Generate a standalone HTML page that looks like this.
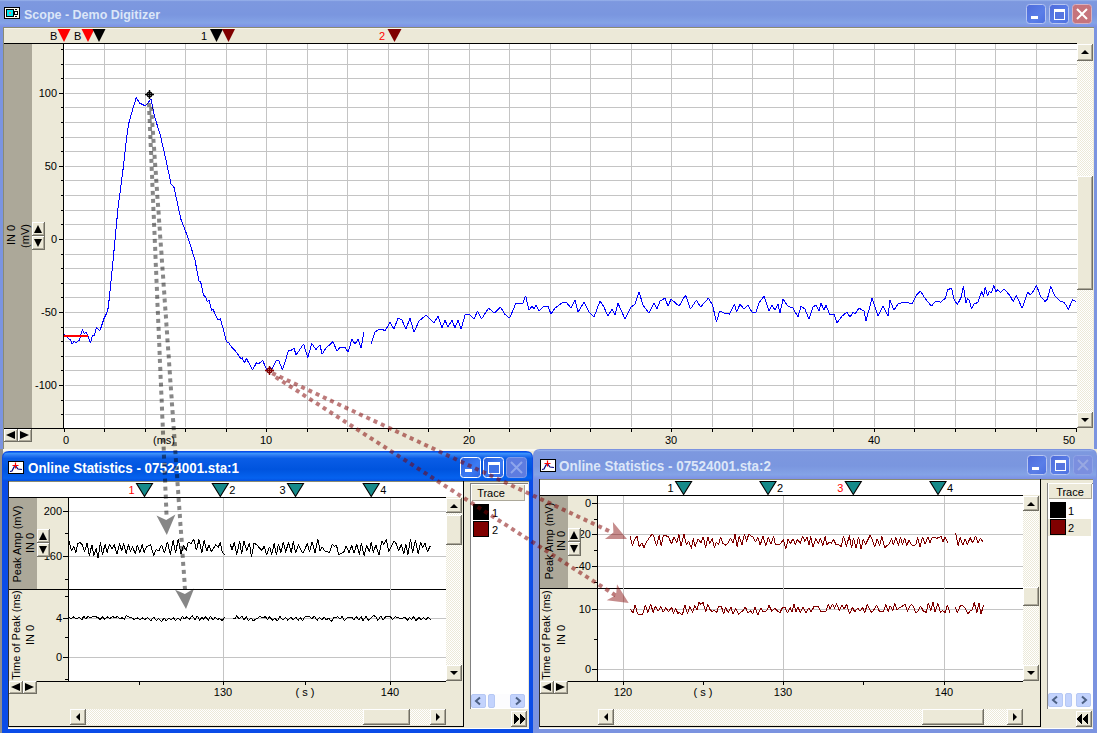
<!DOCTYPE html>
<html><head><meta charset="utf-8"><style>
html,body{margin:0;padding:0;width:1097px;height:733px;overflow:hidden;background:#ECE9D8}
svg{display:block;font-family:"Liberation Sans",sans-serif}
</style></head><body>
<svg width="1097" height="733" viewBox="0 0 1097 733" shape-rendering="crispEdges">

<defs>
<pattern id="dith" width="2" height="2" patternUnits="userSpaceOnUse">
<rect width="2" height="2" fill="#FFFFFF"/><rect width="1" height="1" fill="#ECE9D8"/><rect x="1" y="1" width="1" height="1" fill="#ECE9D8"/>
</pattern>
<linearGradient id="inact" x1="0" y1="0" x2="0" y2="1">
<stop offset="0" stop-color="#9AB4EC"/><stop offset="0.06" stop-color="#7D98DF"/>
<stop offset="0.55" stop-color="#7A96DF"/><stop offset="0.85" stop-color="#84A3E6"/><stop offset="1" stop-color="#7C90E6"/>
</linearGradient>
<linearGradient id="act" x1="0" y1="0" x2="0" y2="1">
<stop offset="0" stop-color="#0058EE"/><stop offset="0.05" stop-color="#3D93FA"/><stop offset="0.12" stop-color="#2A78F2"/>
<stop offset="0.22" stop-color="#0A5DE6"/><stop offset="0.6" stop-color="#0054DE"/><stop offset="0.9" stop-color="#0562EF"/><stop offset="1" stop-color="#0450E0"/>
</linearGradient>
<linearGradient id="ibtn" x1="0" y1="0" x2="1" y2="1">
<stop offset="0" stop-color="#4E6BDB"/><stop offset="0.6" stop-color="#5A7EE8"/><stop offset="1" stop-color="#4C6FE0"/>
</linearGradient>
<linearGradient id="abtn" x1="0" y1="0" x2="1" y2="1">
<stop offset="0" stop-color="#2A5EDC"/><stop offset="0.6" stop-color="#3C7CF4"/><stop offset="1" stop-color="#2D62E0"/>
</linearGradient>
</defs>

<rect x="0" y="0" width="1097" height="449" fill="#7B94E0" />
<rect x="0" y="0" width="1097" height="27" fill="url(#inact)" />
<rect x="3" y="27" width="1091" height="422" fill="#ECE9D8" />
<rect x="3" y="27" width="1091" height="1" fill="#8A8B72"/>
<rect x="3" y="27" width="1" height="422" fill="#8A8B72"/>
<rect x="4" y="28" width="1089" height="1" fill="#F7F5EC"/>
<rect x="4" y="7" width="16" height="12" fill="#000" />
<rect x="5" y="8" width="14" height="10" fill="#FFFFF0" />
<rect x="6" y="9" width="8" height="8" fill="#000" />
<rect x="7" y="10" width="6" height="6" fill="#00E8F0" />
<rect x="15" y="9" width="2" height="1" fill="#000" />
<rect x="15" y="16" width="2" height="1" fill="#000" />
<rect x="14" y="11" width="4" height="4" fill="#000" />
<rect x="15" y="12" width="2" height="2" fill="#FFF" />
<rect x="9" y="12" width="2" height="2" fill="#E08080" />
<text x="24" y="18.5" font-size="13.5" text-anchor="start" fill="#DCE6F8" font-weight="bold" textLength="136" lengthAdjust="spacingAndGlyphs">Scope - Demo Digitizer</text>
<rect x="1026.5" y="4.5" width="19" height="19" rx="3" fill="url(#ibtn)" stroke="#B8C6F2" stroke-width="1" shape-rendering="geometricPrecision"/>
<rect x="1031" y="16" width="7" height="3" fill="#FFFFFF" />
<rect x="1049.5" y="4.5" width="19" height="19" rx="3" fill="url(#ibtn)" stroke="#B8C6F2" stroke-width="1" shape-rendering="geometricPrecision"/>
<rect x="1054" y="9" width="11" height="11" fill="#FFFFFF" />
<rect x="1055" y="12" width="9" height="7" fill="#5675E0" />
<rect x="1072.5" y="4.5" width="19" height="19" rx="3" fill="#C6747C" stroke="#D7B0C0" stroke-width="1" shape-rendering="geometricPrecision"/>
<path d="M1077 9 L1087 19 M1087 9 L1077 19" stroke="#FFFFFF" stroke-width="2" shape-rendering="geometricPrecision"/>
<rect x="4" y="43" width="1073" height="1" fill="#000"/>
<rect x="4" y="44" width="28" height="384" fill="#ACA899" />
<rect x="64" y="44" width="1013" height="384" fill="#FFFFFF" />
<rect x="104" y="44" width="1" height="383" fill="#C4C4C4"/>
<rect x="145" y="44" width="1" height="383" fill="#C4C4C4"/>
<rect x="185" y="44" width="1" height="383" fill="#C4C4C4"/>
<rect x="226" y="44" width="1" height="383" fill="#C4C4C4"/>
<rect x="266" y="44" width="1" height="383" fill="#C4C4C4"/>
<rect x="307" y="44" width="1" height="383" fill="#C4C4C4"/>
<rect x="347" y="44" width="1" height="383" fill="#C4C4C4"/>
<rect x="388" y="44" width="1" height="383" fill="#C4C4C4"/>
<rect x="428" y="44" width="1" height="383" fill="#C4C4C4"/>
<rect x="469" y="44" width="1" height="383" fill="#C4C4C4"/>
<rect x="509" y="44" width="1" height="383" fill="#C4C4C4"/>
<rect x="550" y="44" width="1" height="383" fill="#C4C4C4"/>
<rect x="590" y="44" width="1" height="383" fill="#C4C4C4"/>
<rect x="631" y="44" width="1" height="383" fill="#C4C4C4"/>
<rect x="671" y="44" width="1" height="383" fill="#C4C4C4"/>
<rect x="712" y="44" width="1" height="383" fill="#C4C4C4"/>
<rect x="752" y="44" width="1" height="383" fill="#C4C4C4"/>
<rect x="793" y="44" width="1" height="383" fill="#C4C4C4"/>
<rect x="833" y="44" width="1" height="383" fill="#C4C4C4"/>
<rect x="874" y="44" width="1" height="383" fill="#C4C4C4"/>
<rect x="914" y="44" width="1" height="383" fill="#C4C4C4"/>
<rect x="955" y="44" width="1" height="383" fill="#C4C4C4"/>
<rect x="995" y="44" width="1" height="383" fill="#C4C4C4"/>
<rect x="1036" y="44" width="1" height="383" fill="#C4C4C4"/>
<rect x="65" y="414" width="1012" height="1" fill="#C4C4C4"/>
<rect x="65" y="400" width="1012" height="1" fill="#C4C4C4"/>
<rect x="65" y="385" width="1012" height="1" fill="#C4C4C4"/>
<rect x="65" y="370" width="1012" height="1" fill="#C4C4C4"/>
<rect x="65" y="356" width="1012" height="1" fill="#C4C4C4"/>
<rect x="65" y="341" width="1012" height="1" fill="#C4C4C4"/>
<rect x="65" y="327" width="1012" height="1" fill="#C4C4C4"/>
<rect x="65" y="312" width="1012" height="1" fill="#C4C4C4"/>
<rect x="65" y="297" width="1012" height="1" fill="#C4C4C4"/>
<rect x="65" y="283" width="1012" height="1" fill="#C4C4C4"/>
<rect x="65" y="268" width="1012" height="1" fill="#C4C4C4"/>
<rect x="65" y="254" width="1012" height="1" fill="#C4C4C4"/>
<rect x="65" y="239" width="1012" height="1" fill="#C4C4C4"/>
<rect x="65" y="224" width="1012" height="1" fill="#C4C4C4"/>
<rect x="65" y="210" width="1012" height="1" fill="#C4C4C4"/>
<rect x="65" y="195" width="1012" height="1" fill="#C4C4C4"/>
<rect x="65" y="180" width="1012" height="1" fill="#C4C4C4"/>
<rect x="65" y="166" width="1012" height="1" fill="#C4C4C4"/>
<rect x="65" y="151" width="1012" height="1" fill="#C4C4C4"/>
<rect x="65" y="137" width="1012" height="1" fill="#C4C4C4"/>
<rect x="65" y="122" width="1012" height="1" fill="#C4C4C4"/>
<rect x="65" y="107" width="1012" height="1" fill="#C4C4C4"/>
<rect x="65" y="93" width="1012" height="1" fill="#C4C4C4"/>
<rect x="65" y="78" width="1012" height="1" fill="#C4C4C4"/>
<rect x="65" y="64" width="1012" height="1" fill="#C4C4C4"/>
<rect x="65" y="49" width="1012" height="1" fill="#C4C4C4"/>
<rect x="63" y="43" width="1" height="386" fill="#000"/>
<rect x="4" y="428" width="1073" height="1" fill="#000"/>
<rect x="61" y="414" width="2" height="1" fill="#000"/>
<rect x="61" y="400" width="2" height="1" fill="#000"/>
<rect x="59" y="385" width="4" height="1" fill="#000"/>
<text x="57" y="389" font-size="11" text-anchor="end" fill="#000" font-weight="normal" >-100</text>
<rect x="61" y="370" width="2" height="1" fill="#000"/>
<rect x="61" y="356" width="2" height="1" fill="#000"/>
<rect x="61" y="341" width="2" height="1" fill="#000"/>
<rect x="61" y="327" width="2" height="1" fill="#000"/>
<rect x="59" y="312" width="4" height="1" fill="#000"/>
<text x="57" y="316" font-size="11" text-anchor="end" fill="#000" font-weight="normal" >-50</text>
<rect x="61" y="297" width="2" height="1" fill="#000"/>
<rect x="61" y="283" width="2" height="1" fill="#000"/>
<rect x="61" y="268" width="2" height="1" fill="#000"/>
<rect x="61" y="254" width="2" height="1" fill="#000"/>
<rect x="59" y="239" width="4" height="1" fill="#000"/>
<text x="57" y="243" font-size="11" text-anchor="end" fill="#000" font-weight="normal" >0</text>
<rect x="61" y="224" width="2" height="1" fill="#000"/>
<rect x="61" y="210" width="2" height="1" fill="#000"/>
<rect x="61" y="195" width="2" height="1" fill="#000"/>
<rect x="61" y="180" width="2" height="1" fill="#000"/>
<rect x="59" y="166" width="4" height="1" fill="#000"/>
<text x="57" y="170" font-size="11" text-anchor="end" fill="#000" font-weight="normal" >50</text>
<rect x="61" y="151" width="2" height="1" fill="#000"/>
<rect x="61" y="137" width="2" height="1" fill="#000"/>
<rect x="61" y="122" width="2" height="1" fill="#000"/>
<rect x="61" y="107" width="2" height="1" fill="#000"/>
<rect x="59" y="93" width="4" height="1" fill="#000"/>
<text x="57" y="97" font-size="11" text-anchor="end" fill="#000" font-weight="normal" >100</text>
<rect x="61" y="78" width="2" height="1" fill="#000"/>
<rect x="61" y="64" width="2" height="1" fill="#000"/>
<rect x="61" y="49" width="2" height="1" fill="#000"/>
<rect x="64" y="429" width="1" height="3" fill="#000"/>
<rect x="104" y="429" width="1" height="3" fill="#000"/>
<rect x="145" y="429" width="1" height="3" fill="#000"/>
<rect x="185" y="429" width="1" height="3" fill="#000"/>
<rect x="226" y="429" width="1" height="3" fill="#000"/>
<rect x="266" y="429" width="1" height="3" fill="#000"/>
<rect x="307" y="429" width="1" height="3" fill="#000"/>
<rect x="347" y="429" width="1" height="3" fill="#000"/>
<rect x="388" y="429" width="1" height="3" fill="#000"/>
<rect x="428" y="429" width="1" height="3" fill="#000"/>
<rect x="469" y="429" width="1" height="3" fill="#000"/>
<rect x="509" y="429" width="1" height="3" fill="#000"/>
<rect x="550" y="429" width="1" height="3" fill="#000"/>
<rect x="590" y="429" width="1" height="3" fill="#000"/>
<rect x="631" y="429" width="1" height="3" fill="#000"/>
<rect x="671" y="429" width="1" height="3" fill="#000"/>
<rect x="712" y="429" width="1" height="3" fill="#000"/>
<rect x="752" y="429" width="1" height="3" fill="#000"/>
<rect x="793" y="429" width="1" height="3" fill="#000"/>
<rect x="833" y="429" width="1" height="3" fill="#000"/>
<rect x="874" y="429" width="1" height="3" fill="#000"/>
<rect x="914" y="429" width="1" height="3" fill="#000"/>
<rect x="955" y="429" width="1" height="3" fill="#000"/>
<rect x="995" y="429" width="1" height="3" fill="#000"/>
<rect x="1036" y="429" width="1" height="3" fill="#000"/>
<rect x="1076" y="429" width="1" height="3" fill="#000"/>
<text x="66" y="444" font-size="11" text-anchor="middle" fill="#000" font-weight="normal" >0</text>
<text x="266" y="444" font-size="11" text-anchor="middle" fill="#000" font-weight="normal" >10</text>
<text x="469" y="444" font-size="11" text-anchor="middle" fill="#000" font-weight="normal" >20</text>
<text x="671" y="444" font-size="11" text-anchor="middle" fill="#000" font-weight="normal" >30</text>
<text x="874" y="444" font-size="11" text-anchor="middle" fill="#000" font-weight="normal" >40</text>
<text x="1069" y="444" font-size="11" text-anchor="middle" fill="#000" font-weight="normal" >50</text>
<text x="164" y="444" font-size="11" text-anchor="middle" fill="#000" font-weight="normal" >(ms)</text>
<text transform="translate(15,235) rotate(-90)" font-size="11" text-anchor="middle">IN 0</text>
<text transform="translate(29,236) rotate(-90)" font-size="11" text-anchor="middle">(mV)</text>
<rect x="32" y="222" width="13" height="14" fill="#716F64" />
<rect x="32" y="222" width="12" height="13" fill="#FFFFFF" />
<rect x="33" y="223" width="11" height="12" fill="#ACA899" />
<rect x="33" y="223" width="10" height="11" fill="#ECE9D8" />
<rect x="32" y="236" width="13" height="14" fill="#716F64" />
<rect x="32" y="236" width="12" height="13" fill="#FFFFFF" />
<rect x="33" y="237" width="11" height="12" fill="#ACA899" />
<rect x="33" y="237" width="10" height="11" fill="#ECE9D8" />
<polygon points="34,233 42,233 38,225" fill="#000" shape-rendering="geometricPrecision"/>
<polygon points="34,239 42,239 38,247" fill="#000" shape-rendering="geometricPrecision"/>
<rect x="4" y="429" width="14" height="13" fill="#716F64" />
<rect x="4" y="429" width="13" height="12" fill="#FFFFFF" />
<rect x="5" y="430" width="12" height="11" fill="#ACA899" />
<rect x="5" y="430" width="11" height="10" fill="#ECE9D8" />
<rect x="18" y="429" width="14" height="13" fill="#716F64" />
<rect x="18" y="429" width="13" height="12" fill="#FFFFFF" />
<rect x="19" y="430" width="12" height="11" fill="#ACA899" />
<rect x="19" y="430" width="11" height="10" fill="#ECE9D8" />
<polygon points="6,435 15,431 15,439" fill="#000" shape-rendering="geometricPrecision"/>
<polygon points="29,435 20,431 20,439" fill="#000" shape-rendering="geometricPrecision"/>
<rect x="1077" y="44" width="16" height="384" fill="url(#dith)" />
<rect x="1077" y="44" width="16" height="17" fill="#716F64" />
<rect x="1077" y="44" width="15" height="16" fill="#FFFFFF" />
<rect x="1078" y="45" width="14" height="15" fill="#ACA899" />
<rect x="1078" y="45" width="13" height="14" fill="#ECE9D8" />
<polygon points="1081,54.0 1089,54.0 1085,50.0" fill="#000" shape-rendering="geometricPrecision"/>
<rect x="1077" y="412" width="16" height="16" fill="#716F64" />
<rect x="1077" y="412" width="15" height="15" fill="#FFFFFF" />
<rect x="1078" y="413" width="14" height="14" fill="#ACA899" />
<rect x="1078" y="413" width="13" height="13" fill="#ECE9D8" />
<polygon points="1081,418.0 1089,418.0 1085,422.0" fill="#000" shape-rendering="geometricPrecision"/>
<rect x="1077" y="176" width="16" height="114" fill="#716F64" />
<rect x="1077" y="176" width="15" height="113" fill="#FFFFFF" />
<rect x="1078" y="177" width="14" height="112" fill="#ACA899" />
<rect x="1078" y="177" width="13" height="111" fill="#ECE9D8" />
<text x="50" y="40" font-size="11" text-anchor="start" fill="#000" font-weight="normal" >B</text>
<polygon points="57.5,29 70.5,29 64,42" fill="#FF0000" shape-rendering="geometricPrecision"/>
<text x="74" y="40" font-size="11" text-anchor="start" fill="#000" font-weight="normal" >B</text>
<polygon points="81.5,29 94.5,29 88,42" fill="#FF0000" shape-rendering="geometricPrecision"/>
<polygon points="92.5,29 105.5,29 99,42" fill="#000000" shape-rendering="geometricPrecision"/>
<text x="201" y="40" font-size="11" text-anchor="start" fill="#000" font-weight="normal" >1</text>
<polygon points="210.0,29 223.0,29 216.5,42" fill="#000000" shape-rendering="geometricPrecision"/>
<polygon points="222.0,29 235.0,29 228.5,42" fill="#800000" shape-rendering="geometricPrecision"/>
<text x="379" y="40" font-size="11" text-anchor="start" fill="#FF0000" font-weight="normal" >2</text>
<polygon points="387.5,29 401.5,29 394.5,42" fill="#800000" shape-rendering="geometricPrecision"/>
<path d="M64.1 334.0 L67.4 337.7 L70.6 340.1 L72.3 344.2 L73.9 341.7 L76.4 342.2 L79.6 340.1 L81.3 332.7 L82.5 329.5 L84.1 333.1 L86.2 332.7 L87.4 334.8 L90.3 343.0 L92.7 335.2 L94.4 335.2 L96.4 327.0 L98.5 329.9 L100.1 330.3 L104.2 318.0 L106.7 313.1 L108.3 307.4 L110.1 290.0 L113.8 252.8 L118.0 208.0 L123.6 165.0 L126.4 139.5 L128.6 124.0 L132.0 111.6 L136.2 97.6 L139.8 103.2 L145.4 106.0 L151.0 99.0 L154.3 115.8 L160.0 134.0 L165.5 157.7 L171.1 184.3 L173.9 187.0 L180.9 219.3 L187.9 237.4 L194.9 259.8 L199.0 280.8 L200.7 282.0 L203.4 295.0 L205.5 297.0 L207.5 301.8 L208.9 299.8 L211.6 310.7 L213.0 309.3 L217.7 319.5 L220.5 318.9 L226.6 342.0 L228.6 342.7 L231.4 346.8 L235.5 351.0 L241.0 359.0 L242.3 357.7 L244.3 363.2 L246.4 358.4 L252.5 370.0 L256.6 362.5 L258.6 363.9 L262.7 360.5 L266.8 370.0 L269.5 367.3 L272.3 368.6 L276.4 360.5 L279.0 361.0 L282.5 370.0 L288.6 350.2 L291.4 350.2 L294.0 348.2 L296.1 355.0 L303.6 344.0 L307.7 357.7 L311.8 343.4 L315.9 349.5 L320.0 344.8 L322.0 354.2 L326.0 348.1 L333.0 341.7 L337.0 351.2 L340.0 347.1 L345.0 347.1 L348.0 352.2 L352.0 339.1 L355.0 344.1 L358.0 339.1 L361.0 348.1 L364.0 332.1 M371.0 344.1 L375.0 332.1 L379.0 329.1 L382.0 329.1 L385.0 331.1 L390.0 322.1 L394.0 329.1 L398.0 318.1 L402.0 320.1 L406.0 329.1 L410.0 318.1 L414.0 332.1 L419.0 321.1 L426.0 315.1 L434.0 323.1 L438.0 316.1 L442.0 328.1 L445.0 320.1 L448.0 327.1 L452.0 320.1 L455.0 328.1 L458.0 320.1 L461.0 329.1 L465.0 315.1 L469.0 314.1 L474.0 319.1 L477.5 311.1 L481.5 319.1 L488.5 308.0 L494.5 313.1 L500.6 307.0 L504.6 314.1 L509.6 318.1 L515.6 304.0 L520.0 303.1 L523.0 303.1 L525.6 295.7 L529.0 310.1 L532.0 306.1 L534.0 309.1 L536.0 305.1 L539.0 311.1 L543.0 307.1 L548.0 306.1 L551.0 314.1 L555.0 308.1 L563.0 302.1 L567.0 303.1 L571.0 308.1 L575.0 300.1 L578.0 312.1 L584.0 302.1 L589.0 312.1 L594.0 317.1 L600.0 301.1 L604.0 307.1 L608.0 316.1 L612.0 309.1 L615.0 315.1 L618.0 303.1 L625.0 319.1 L631.0 307.1 L635.0 304.1 L639.0 291.7 L643.0 305.1 L649.0 313.1 L654.0 303.1 L657.0 309.1 L660.0 301.1 L665.0 298.1 L668.0 306.1 L671.0 299.1 L679.0 306.1 L685.5 295.1 L690.5 309.1 L696.5 300.1 L700.5 307.1 L708.5 298.1 L712.5 305.1 L716.5 322.1 L719.6 311.1 L724.6 313.1 L729.6 314.1 L734.6 304.1 L736.6 312.1 L740.0 304.1 L744.0 309.1 L748.0 305.1 L752.0 312.1 L756.0 312.1 L759.0 303.1 L764.0 296.1 L769.0 311.1 L772.0 305.1 L775.0 310.1 L778.0 304.1 L780.0 313.1 L783.0 299.1 L788.0 306.1 L793.0 308.1 L798.0 317.1 L801.0 306.1 L805.0 309.1 L809.0 319.1 L813.0 307.1 L816.0 305.1 L819.0 311.1 L821.0 303.1 L824.0 310.1 L826.0 305.1 L830.0 315.1 L834.0 314.1 L837.0 323.1 L842.0 316.1 L847.0 312.1 L850.0 317.1 L853.0 312.1 L855.0 314.1 L859.0 308.1 L864.0 311.1 L866.0 321.1 L872.0 298.1 L878.0 316.1 L883.0 306.1 L888.0 316.1 L890.0 300.1 L894.0 310.1 L898.0 304.1 L903.0 302.1 L907.0 302.1 L912.0 304.1 L916.5 295.1 L920.5 291.1 L925.5 299.1 L931.5 306.1 L935.5 301.1 L940.6 302.1 L945.6 298.1 L947.6 290.0 L951.6 288.0 L953.6 298.1 L957.3 304.8 L961.3 296.9 L963.5 286.1 L965.8 303.1 L967.5 298.6 L969.2 300.3 L971.5 308.3 L974.4 303.7 L977.8 302.6 L981.8 291.2 L983.5 296.9 L985.2 287.2 L987.5 295.7 L989.2 291.8 L991.5 292.3 L993.7 285.5 L996.0 292.3 L997.7 289.5 L1000.6 292.3 L1004.0 288.9 L1009.7 295.2 L1013.1 301.4 L1016.5 295.7 L1022.2 308.3 L1027.9 291.8 L1030.2 295.2 L1033.6 290.6 L1036.5 285.5 L1040.5 296.3 L1045.0 301.4 L1047.3 299.2 L1050.7 286.1 L1054.7 295.7 L1059.8 300.9 L1064.4 302.6 L1068.4 309.4 L1072.4 299.7 L1075.8 301.4" fill="none" stroke="#0000FF" stroke-width="1" stroke-linejoin="bevel" shape-rendering="crispEdges"/>
<rect x="64" y="335" width="24" height="2" fill="#FF0000"/>
<g stroke="#000" fill="none" shape-rendering="geometricPrecision"><path d="M145.0 94.5 H154.0 M149.5 90.0 V99.0" stroke-width="1.4"/><circle cx="149.5" cy="94.5" r="2.3" stroke-width="1.3"/></g>
<g stroke="#800000" fill="none" shape-rendering="geometricPrecision"><path d="M265.0 370.5 H274.0 M269.5 366.0 V375.0" stroke-width="1.4"/><circle cx="269.5" cy="370.5" r="2.3" stroke-width="1.3"/></g>
<rect x="0" y="449" width="3" height="284" fill="#8F8F8F" />
<rect x="3" y="449" width="1091" height="2" fill="#F8F7F0"/>
<path d="M2 458 Q2 451 9 451 H526 Q533 451 533 458 V733 H2 Z" fill="#0A4CE8" shape-rendering="geometricPrecision"/>
<path d="M3 458 Q3 452 9 452 H526 Q532 452 532 458 V481 H3 Z" fill="url(#act)" shape-rendering="geometricPrecision"/>
<rect x="8" y="461" width="16" height="13" fill="#000" />
<rect x="9" y="462" width="14" height="11" fill="#FFFFFF" />
<path d="M10 471.5 L12 471 L14 467 L16 466.5 L18 469 L22 469.5" stroke="#000080" fill="none" stroke-width="1.2" shape-rendering="geometricPrecision"/>
<path d="M12.5 465.5 H18.5 M15.5 462.5 V468.5" stroke="#FF0000" stroke-width="1.2" shape-rendering="geometricPrecision"/>
<text x="28" y="473" font-size="14" text-anchor="start" fill="#FFFFFF" font-weight="bold" textLength="211" lengthAdjust="spacingAndGlyphs">Online Statistics - 07524001.sta:1</text>
<rect x="460.5" y="457.5" width="20" height="20" rx="3" fill="url(#abtn)" stroke="#FFFFFF" stroke-width="1" shape-rendering="geometricPrecision"/>
<rect x="465" y="469" width="7" height="3" fill="#FFFFFF" />
<rect x="483.5" y="457.5" width="20" height="20" rx="3" fill="url(#abtn)" stroke="#FFFFFF" stroke-width="1" shape-rendering="geometricPrecision"/>
<rect x="488" y="462" width="12" height="12" fill="#FFFFFF" />
<rect x="489" y="465" width="10" height="8" fill="#3F72E6" />
<rect x="506.5" y="457.5" width="20" height="20" rx="3" fill="#5E7CE0" stroke="#7E9AEA" stroke-width="1" shape-rendering="geometricPrecision"/>
<path d="M511 462 L522 473 M522 462 L511 473" stroke="#8EA6EC" stroke-width="2" shape-rendering="geometricPrecision"/>
<rect x="8" y="481" width="521" height="248" fill="#ECE9D8" />
<rect x="8" y="481" width="521" height="1" fill="#8A8B72"/>
<rect x="8" y="481" width="1" height="246" fill="#303030"/>
<rect x="8" y="728" width="521" height="1" fill="#FFFFFF"/>
<rect x="9" y="482" width="454" height="15" fill="#FFFFFF" />
<rect x="9" y="497" width="437" height="1" fill="#000"/>
<rect x="9" y="498" width="28" height="91" fill="#ACA899" />
<rect x="69" y="498" width="377" height="91" fill="#FFFFFF" />
<rect x="9" y="589" width="437" height="1" fill="#000"/>
<rect x="69" y="590" width="377" height="91" fill="#FFFFFF" />
<rect x="223" y="498" width="1" height="183" fill="#C4C4C4"/>
<rect x="390" y="498" width="1" height="183" fill="#C4C4C4"/>
<rect x="69" y="511" width="377" height="1" fill="#C4C4C4"/>
<rect x="69" y="556" width="377" height="1" fill="#C4C4C4"/>
<rect x="69" y="618" width="377" height="1" fill="#C4C4C4"/>
<rect x="69" y="657" width="377" height="1" fill="#C4C4C4"/>
<rect x="68" y="498" width="1" height="184" fill="#000"/>
<rect x="36" y="681" width="410" height="1" fill="#000"/>
<rect x="63" y="511" width="5" height="1" fill="#000"/>
<text x="62" y="515" font-size="11" text-anchor="end" fill="#000" font-weight="normal" >200</text>
<rect x="63" y="556" width="5" height="1" fill="#000"/>
<text x="62" y="560" font-size="11" text-anchor="end" fill="#000" font-weight="normal" >160</text>
<rect x="63" y="618" width="5" height="1" fill="#000"/>
<text x="62" y="622" font-size="11" text-anchor="end" fill="#000" font-weight="normal" >4</text>
<rect x="63" y="657" width="5" height="1" fill="#000"/>
<text x="62" y="661" font-size="11" text-anchor="end" fill="#000" font-weight="normal" >0</text>
<rect x="65" y="533" width="3" height="1" fill="#000"/>
<rect x="65" y="579" width="3" height="1" fill="#000"/>
<rect x="65" y="596" width="3" height="1" fill="#000"/>
<rect x="65" y="637" width="3" height="1" fill="#000"/>
<rect x="65" y="679" width="3" height="1" fill="#000"/>
<rect x="139" y="682" width="1" height="3" fill="#000"/>
<rect x="223" y="682" width="1" height="3" fill="#000"/>
<rect x="305" y="682" width="1" height="3" fill="#000"/>
<rect x="390" y="682" width="1" height="3" fill="#000"/>
<text x="223" y="696" font-size="11" text-anchor="middle" fill="#000" font-weight="normal" >130</text>
<text x="305" y="696" font-size="11" text-anchor="middle" fill="#000" font-weight="normal" >( s )</text>
<text x="390" y="696" font-size="11" text-anchor="middle" fill="#000" font-weight="normal" >140</text>
<text transform="translate(21,544) rotate(-90)" font-size="11" text-anchor="middle">Peak Amp (mV)</text>
<text transform="translate(34,543) rotate(-90)" font-size="11" text-anchor="middle">IN 0</text>
<text transform="translate(20,635) rotate(-90)" font-size="11" text-anchor="middle">Time of Peak (ms)</text>
<text transform="translate(34,635) rotate(-90)" font-size="11" text-anchor="middle">IN 0</text>
<rect x="37" y="529" width="13" height="14" fill="#716F64" />
<rect x="37" y="529" width="12" height="13" fill="#FFFFFF" />
<rect x="38" y="530" width="11" height="12" fill="#ACA899" />
<rect x="38" y="530" width="10" height="11" fill="#ECE9D8" />
<rect x="37" y="543" width="13" height="14" fill="#716F64" />
<rect x="37" y="543" width="12" height="13" fill="#FFFFFF" />
<rect x="38" y="544" width="11" height="12" fill="#ACA899" />
<rect x="38" y="544" width="10" height="11" fill="#ECE9D8" />
<polygon points="39,540 47,540 43,532" fill="#000" shape-rendering="geometricPrecision"/>
<polygon points="39,546 47,546 43,554" fill="#000" shape-rendering="geometricPrecision"/>
<rect x="9" y="681" width="14" height="13" fill="#716F64" />
<rect x="9" y="681" width="13" height="12" fill="#FFFFFF" />
<rect x="10" y="682" width="12" height="11" fill="#ACA899" />
<rect x="10" y="682" width="11" height="10" fill="#ECE9D8" />
<rect x="23" y="681" width="14" height="13" fill="#716F64" />
<rect x="23" y="681" width="13" height="12" fill="#FFFFFF" />
<rect x="24" y="682" width="12" height="11" fill="#ACA899" />
<rect x="24" y="682" width="11" height="10" fill="#ECE9D8" />
<polygon points="11,687 20,683 20,691" fill="#000" shape-rendering="geometricPrecision"/>
<polygon points="34,687 25,683 25,691" fill="#000" shape-rendering="geometricPrecision"/>
<rect x="86" y="709" width="344" height="16" fill="url(#dith)" />
<rect x="70" y="709" width="16" height="16" fill="#716F64" />
<rect x="70" y="709" width="15" height="15" fill="#FFFFFF" />
<rect x="71" y="710" width="14" height="14" fill="#ACA899" />
<rect x="71" y="710" width="13" height="13" fill="#ECE9D8" />
<polygon points="80.0,713 80.0,721 76.0,717" fill="#000" shape-rendering="geometricPrecision"/>
<rect x="430" y="709" width="16" height="16" fill="#716F64" />
<rect x="430" y="709" width="15" height="15" fill="#FFFFFF" />
<rect x="431" y="710" width="14" height="14" fill="#ACA899" />
<rect x="431" y="710" width="13" height="13" fill="#ECE9D8" />
<polygon points="436.0,713 436.0,721 440.0,717" fill="#000" shape-rendering="geometricPrecision"/>
<rect x="363" y="709" width="47" height="16" fill="#716F64" />
<rect x="363" y="709" width="46" height="15" fill="#FFFFFF" />
<rect x="364" y="710" width="45" height="14" fill="#ACA899" />
<rect x="364" y="710" width="44" height="13" fill="#ECE9D8" />
<rect x="9" y="726" width="455" height="1" fill="#000"/>
<rect x="446" y="498" width="16" height="183" fill="url(#dith)" />
<rect x="446" y="498" width="16" height="15" fill="#716F64" />
<rect x="446" y="498" width="15" height="14" fill="#FFFFFF" />
<rect x="447" y="499" width="14" height="13" fill="#ACA899" />
<rect x="447" y="499" width="13" height="12" fill="#ECE9D8" />
<polygon points="450,508.0 458,508.0 454,504.0" fill="#000" shape-rendering="geometricPrecision"/>
<rect x="446" y="515" width="16" height="30" fill="#716F64" />
<rect x="446" y="515" width="15" height="29" fill="#FFFFFF" />
<rect x="447" y="516" width="14" height="28" fill="#ACA899" />
<rect x="447" y="516" width="13" height="27" fill="#ECE9D8" />
<rect x="446" y="665" width="16" height="16" fill="#716F64" />
<rect x="446" y="665" width="15" height="15" fill="#FFFFFF" />
<rect x="447" y="666" width="14" height="14" fill="#ACA899" />
<rect x="447" y="666" width="13" height="13" fill="#ECE9D8" />
<polygon points="450,671.0 458,671.0 454,675.0" fill="#000" shape-rendering="geometricPrecision"/>
<rect x="463" y="481" width="1" height="246" fill="#000"/>
<rect x="470" y="483" width="58" height="226" fill="#FFFFFF" />
<rect x="470" y="483" width="1" height="226" fill="#808080"/>
<rect x="470" y="483" width="58" height="1" fill="#808080"/>
<rect x="471" y="484" width="56" height="225" fill="#FFFFFF" />
<rect x="471" y="484" width="54" height="17" fill="#FFFFFF" />
<rect x="472" y="485" width="53" height="16" fill="#ACA899" />
<rect x="472" y="485" width="52" height="15" fill="#ECE9D8" />
<text x="491" y="497" font-size="11" text-anchor="middle" fill="#000" font-weight="normal" >Trace</text>
<rect x="473" y="504" width="16" height="16" fill="#000" />
<text x="492" y="517" font-size="11" text-anchor="start" fill="#000" font-weight="normal" >1</text>
<rect x="473" y="521" width="16" height="16" fill="#000" />
<rect x="474" y="522" width="14" height="14" fill="#800000" />
<text x="492" y="534" font-size="11" text-anchor="start" fill="#000" font-weight="normal" >2</text>
<rect x="471" y="694" width="54" height="14" fill="#FCFCFE" />
<rect x="471.5" y="694.5" width="14" height="13" rx="1.5" fill="#C3D3FD" stroke="#B6C8F4" shape-rendering="geometricPrecision"/>
<path d="M480 697.5 L476 701 L480 704.5" stroke="#4D6185" stroke-width="2" fill="none" shape-rendering="geometricPrecision"/>
<rect x="488.5" y="694.5" width="6" height="13" rx="1.5" fill="#C3D3FD" stroke="#B6C8F4" shape-rendering="geometricPrecision"/>
<rect x="510.5" y="694.5" width="14" height="13" rx="1.5" fill="#C3D3FD" stroke="#B6C8F4" shape-rendering="geometricPrecision"/>
<path d="M516 697.5 L520 701 L516 704.5" stroke="#4D6185" stroke-width="2" fill="none" shape-rendering="geometricPrecision"/>
<rect x="511" y="711" width="16" height="16" fill="#716F64" />
<rect x="511" y="711" width="15" height="15" fill="#FFFFFF" />
<rect x="512" y="712" width="14" height="14" fill="#ACA899" />
<rect x="512" y="712" width="13" height="13" fill="#ECE9D8" />
<path d="M514 714 L520 719 L514 724 Z M520 714 L526 719 L520 724 Z" fill="#000"/>
<polygon points="136.5,483.5 152.5,483.5 144.5,496.5" fill="#168A8A" stroke="#000" stroke-width="1.1" stroke-linejoin="miter" shape-rendering="geometricPrecision"/>
<text x="134.5" y="494" font-size="11" text-anchor="end" fill="#FF0000" font-weight="normal" >1</text>
<polygon points="212.3,483.5 228.3,483.5 220.3,496.5" fill="#168A8A" stroke="#000" stroke-width="1.1" stroke-linejoin="miter" shape-rendering="geometricPrecision"/>
<text x="229.3" y="494" font-size="11" text-anchor="start" fill="#000" font-weight="normal" >2</text>
<polygon points="287.5,483.5 303.5,483.5 295.5,496.5" fill="#168A8A" stroke="#000" stroke-width="1.1" stroke-linejoin="miter" shape-rendering="geometricPrecision"/>
<text x="285.5" y="494" font-size="11" text-anchor="end" fill="#000" font-weight="normal" >3</text>
<polygon points="363.2,483.5 379.2,483.5 371.2,496.5" fill="#168A8A" stroke="#000" stroke-width="1.1" stroke-linejoin="miter" shape-rendering="geometricPrecision"/>
<text x="380.2" y="494" font-size="11" text-anchor="start" fill="#000" font-weight="normal" >4</text>
<path d="M69.0 540.7 L71.4 550.6 L73.8 546.2 L75.9 552.7 L77.8 543.3 L80.3 542.7 L82.2 544.9 L84.6 551.6 L87.1 542.9 L89.3 555.7 L91.9 544.8 L93.8 555.6 L96.1 548.5 L98.1 558.3 L100.4 542.3 L102.5 554.5 L105.2 543.9 L107.1 552.6 L109.4 544.4 L112.0 548.8 L114.1 544.6 L117.0 553.8 L119.6 543.2 L121.7 550.9 L123.6 543.3 L126.1 553.8 L128.5 544.5 L130.4 551.8 L132.5 546.5 L135.4 554.2 L137.3 545.0 L140.0 552.4 L142.1 544.4 L144.2 552.4 L146.3 547.0 L148.5 545.7 L150.7 544.7 L153.6 555.6 L156.1 549.9 L159.0 550.5 L161.5 545.0 L164.5 553.0 L167.4 541.7 L170.3 554.6 L173.2 540.6 L175.6 553.1 L178.2 539.1 L181.0 553.8 L183.5 545.6 L186.2 550.7 L188.3 542.1 L191.2 543.4 L193.8 539.2 L196.4 550.1 L199.0 539.6 L201.9 552.9 L204.1 540.1 L206.9 551.0 L208.9 544.8 L211.2 551.7 L214.0 547.6 L215.8 544.5 L218.3 547.3 L220.3 542.0 L222.4 552.6 L224.7 554.3 M230.3 544.3 L232.1 549.9 L234.2 542.2 L236.8 554.4 L239.7 540.8 L241.6 554.0 L243.9 541.1 L246.8 550.4 L249.5 542.8 L251.5 557.2 L254.0 543.1 L256.8 544.8 L259.2 547.8 L262.0 550.3 L264.2 546.2 L266.6 555.0 L269.6 546.7 L271.6 554.6 L274.2 543.6 L276.4 555.0 L278.4 544.4 L280.9 552.4 L283.4 541.7 L285.7 552.4 L288.4 542.4 L291.3 552.7 L293.3 541.0 L295.6 552.7 L298.5 544.7 L300.6 549.5 L302.8 553.0 L304.7 550.1 L307.2 543.2 L309.6 551.8 L312.2 541.7 L315.0 552.9 L317.9 539.2 L320.0 550.8 L322.0 546.8 L324.8 550.8 L327.1 551.7 L329.7 552.3 L332.2 544.5 L334.2 546.3 L336.6 545.7 L338.7 554.7 L341.6 553.4 L343.9 551.9 L346.3 545.8 L349.0 553.0 L351.7 545.6 L354.1 553.0 L356.7 544.1 L359.3 554.6 L361.4 543.1 L364.1 555.6 L366.8 545.3 L369.4 552.0 L371.3 541.9 L373.3 552.5 L375.9 544.9 L378.9 555.2 L381.9 541.2 L384.0 544.4 L386.3 539.1 L388.7 551.7 L391.7 545.5 L394.2 541.3 L396.2 543.7 L398.8 550.9 L401.2 544.1 L403.8 553.7 L405.9 544.5 L407.9 554.6 L410.6 539.0 L412.5 552.6 L415.5 540.0 L418.1 553.9 L420.7 542.0 L422.7 547.7 L425.0 543.5 L427.5 551.6 L430.5 545.6" stroke="#000" fill="none" stroke-linejoin="bevel" shape-rendering="crispEdges"/>
<path d="M69.0 616.7 L71.0 619.0 L73.7 616.8 L76.3 618.8 L79.2 617.1 L81.8 619.9 L83.7 616.1 L85.6 619.0 L87.9 616.4 L89.9 617.5 L92.7 616.7 L95.0 616.4 L98.0 617.6 L100.2 619.6 L102.3 616.6 L104.7 619.4 L107.1 616.7 L109.9 618.6 L112.5 616.3 L115.1 618.2 L117.2 616.3 L120.1 618.8 L122.2 617.6 L124.3 619.5 L126.1 615.7 L129.1 617.1 L131.9 617.7 L134.3 619.5 L137.2 617.9 L140.1 620.0 L142.7 617.7 L144.8 619.6 L147.7 617.4 L150.6 620.9 L153.6 617.3 L156.5 620.2 L158.7 618.6 L161.4 621.5 L164.3 617.9 L166.2 621.0 L168.8 618.0 L171.3 619.8 L173.5 617.8 L175.5 620.3 L178.0 618.3 L180.4 620.4 L182.6 616.1 L184.4 619.1 L186.8 616.6 L189.4 619.5 L192.2 615.7 L195.0 619.7 L197.3 615.8 L199.8 620.3 L201.9 617.4 L203.9 619.2 L205.8 616.3 L208.3 620.6 L210.5 616.0 L213.0 620.2 L215.1 617.2 L217.4 619.6 L219.5 618.5 L222.3 620.5 L225.0 616.8 M232.7 617.8 L234.7 619.1 L236.7 615.7 L239.2 619.1 L241.6 615.9 L244.0 619.9 L246.3 616.4 L248.4 620.8 L251.0 617.8 L253.3 621.1 L255.3 619.1 L257.1 618.7 L259.8 615.9 L262.4 617.8 L265.4 616.7 L267.7 619.6 L269.6 616.4 L272.3 620.1 L275.2 618.5 L277.3 620.9 L280.0 616.5 L283.0 620.2 L285.4 617.2 L287.9 620.3 L290.6 617.2 L293.3 619.8 L295.8 617.3 L298.1 620.4 L300.4 617.6 L302.6 620.6 L304.8 617.0 L307.2 616.7 L309.1 615.9 L311.7 619.0 L314.5 616.2 L317.1 620.4 L319.4 617.3 L321.7 619.8 L324.1 617.2 L326.6 620.1 L328.5 618.0 L331.4 621.5 L333.7 617.7 L335.6 617.3 L337.6 616.8 L340.0 619.1 L342.0 616.5 L344.5 620.7 L347.2 617.6 L349.6 617.3 L351.7 617.4 L354.0 619.7 L356.3 616.6 L358.7 620.1 L361.2 616.7 L363.0 620.7 L366.0 616.6 L368.7 620.4 L371.5 617.7 L373.4 615.9 L375.4 616.1 L377.9 620.3 L380.8 616.2 L383.0 620.1 L385.8 616.6 L388.1 616.5 L390.3 616.6 L392.5 619.6 L395.5 616.5 L397.7 617.9 L400.6 618.2 L402.5 618.5 L404.8 617.0 L407.6 620.2 L409.4 617.6 L411.8 619.4 L413.7 616.4 L416.1 620.8 L418.8 617.4 L421.3 620.0 L423.3 617.5 L425.8 620.0 L428.3 617.3 L431.2 620.4" stroke="#000" fill="none" stroke-linejoin="bevel" shape-rendering="crispEdges"/>
<path d="M533 456 Q533 449 540 449 H1090 Q1097 449 1097 456 V733 H533 Z" fill="#7B93E0" shape-rendering="geometricPrecision"/>
<path d="M534 456 Q534 450 540 450 H1090 Q1096 450 1096 456 V479 H534 Z" fill="url(#inact)" shape-rendering="geometricPrecision"/>
<rect x="540" y="459" width="16" height="13" fill="#000" />
<rect x="541" y="460" width="14" height="11" fill="#FFFFFF" />
<path d="M542 469.5 L544 469 L546 465 L548 464.5 L550 467 L554 467.5" stroke="#000080" fill="none" stroke-width="1.2" shape-rendering="geometricPrecision"/>
<path d="M544.5 463.5 H550.5 M547.5 460.5 V466.5" stroke="#FF0000" stroke-width="1.2" shape-rendering="geometricPrecision"/>
<text x="559" y="471" font-size="14" text-anchor="start" fill="#DCE6F8" font-weight="bold" textLength="212" lengthAdjust="spacingAndGlyphs">Online Statistics - 07524001.sta:2</text>
<rect x="1027.5" y="455.5" width="19" height="19" rx="3" fill="url(#ibtn)" stroke="#B8C6F2" stroke-width="1" shape-rendering="geometricPrecision"/>
<rect x="1032" y="467" width="7" height="3" fill="#FFFFFF" />
<rect x="1050.5" y="455.5" width="19" height="19" rx="3" fill="url(#ibtn)" stroke="#B8C6F2" stroke-width="1" shape-rendering="geometricPrecision"/>
<rect x="1055" y="460" width="11" height="11" fill="#FFFFFF" />
<rect x="1056" y="463" width="9" height="7" fill="#5675E0" />
<rect x="1073.5" y="455.5" width="19" height="19" rx="3" fill="#7B8FDF" stroke="#8FA3E6" stroke-width="1" shape-rendering="geometricPrecision"/>
<path d="M1078 460 L1088 470 M1088 460 L1078 470" stroke="#98A8E2" stroke-width="2" shape-rendering="geometricPrecision"/>
<rect x="539" y="479" width="554" height="250" fill="#ECE9D8" />
<rect x="539" y="479" width="554" height="1" fill="#8A8B72"/>
<rect x="539" y="479" width="1" height="248" fill="#303030"/>
<rect x="539" y="728" width="554" height="1" fill="#FFFFFF"/>
<rect x="540" y="480" width="500" height="15" fill="#FFFFFF" />
<rect x="540" y="495" width="483" height="1" fill="#000"/>
<rect x="540" y="496" width="28" height="92" fill="#ACA899" />
<rect x="598" y="496" width="425" height="92" fill="#FFFFFF" />
<rect x="540" y="588" width="483" height="1" fill="#000"/>
<rect x="598" y="589" width="425" height="92" fill="#FFFFFF" />
<rect x="623" y="496" width="1" height="185" fill="#C4C4C4"/>
<rect x="783" y="496" width="1" height="185" fill="#C4C4C4"/>
<rect x="944" y="496" width="1" height="185" fill="#C4C4C4"/>
<rect x="598" y="503" width="425" height="1" fill="#C4C4C4"/>
<rect x="598" y="534" width="425" height="1" fill="#C4C4C4"/>
<rect x="598" y="566" width="425" height="1" fill="#C4C4C4"/>
<rect x="598" y="609" width="425" height="1" fill="#C4C4C4"/>
<rect x="598" y="669" width="425" height="1" fill="#C4C4C4"/>
<rect x="597" y="496" width="1" height="186" fill="#000"/>
<rect x="567" y="681" width="456" height="1" fill="#000"/>
<rect x="592" y="503" width="5" height="1" fill="#000"/>
<text x="591" y="507" font-size="11" text-anchor="end" fill="#000" font-weight="normal" >0</text>
<rect x="592" y="534" width="5" height="1" fill="#000"/>
<text x="591" y="538" font-size="11" text-anchor="end" fill="#000" font-weight="normal" >-20</text>
<rect x="592" y="566" width="5" height="1" fill="#000"/>
<text x="591" y="570" font-size="11" text-anchor="end" fill="#000" font-weight="normal" >-40</text>
<rect x="592" y="609" width="5" height="1" fill="#000"/>
<text x="591" y="613" font-size="11" text-anchor="end" fill="#000" font-weight="normal" >10</text>
<rect x="592" y="669" width="5" height="1" fill="#000"/>
<text x="591" y="673" font-size="11" text-anchor="end" fill="#000" font-weight="normal" >0</text>
<rect x="594" y="519" width="3" height="1" fill="#000"/>
<rect x="594" y="550" width="3" height="1" fill="#000"/>
<rect x="594" y="582" width="3" height="1" fill="#000"/>
<rect x="594" y="639" width="3" height="1" fill="#000"/>
<rect x="623" y="682" width="1" height="3" fill="#000"/>
<rect x="703" y="682" width="1" height="3" fill="#000"/>
<rect x="783" y="682" width="1" height="3" fill="#000"/>
<rect x="863" y="682" width="1" height="3" fill="#000"/>
<rect x="944" y="682" width="1" height="3" fill="#000"/>
<text x="623" y="696" font-size="11" text-anchor="middle" fill="#000" font-weight="normal" >120</text>
<text x="703" y="696" font-size="11" text-anchor="middle" fill="#000" font-weight="normal" >( s )</text>
<text x="783" y="696" font-size="11" text-anchor="middle" fill="#000" font-weight="normal" >130</text>
<text x="944" y="696" font-size="11" text-anchor="middle" fill="#000" font-weight="normal" >140</text>
<text transform="translate(553,541) rotate(-90)" font-size="11" text-anchor="middle">Peak Amp (mV)</text>
<text transform="translate(565,541) rotate(-90)" font-size="11" text-anchor="middle">IN 0</text>
<text transform="translate(550,635) rotate(-90)" font-size="11" text-anchor="middle">Time of Peak (ms)</text>
<text transform="translate(565,635) rotate(-90)" font-size="11" text-anchor="middle">IN 0</text>
<rect x="568" y="528" width="13" height="14" fill="#716F64" />
<rect x="568" y="528" width="12" height="13" fill="#FFFFFF" />
<rect x="569" y="529" width="11" height="12" fill="#ACA899" />
<rect x="569" y="529" width="10" height="11" fill="#ECE9D8" />
<rect x="568" y="542" width="13" height="14" fill="#716F64" />
<rect x="568" y="542" width="12" height="13" fill="#FFFFFF" />
<rect x="569" y="543" width="11" height="12" fill="#ACA899" />
<rect x="569" y="543" width="10" height="11" fill="#ECE9D8" />
<polygon points="570,539 578,539 574,531" fill="#000" shape-rendering="geometricPrecision"/>
<polygon points="570,545 578,545 574,553" fill="#000" shape-rendering="geometricPrecision"/>
<rect x="540" y="681" width="14" height="13" fill="#716F64" />
<rect x="540" y="681" width="13" height="12" fill="#FFFFFF" />
<rect x="541" y="682" width="12" height="11" fill="#ACA899" />
<rect x="541" y="682" width="11" height="10" fill="#ECE9D8" />
<rect x="554" y="681" width="14" height="13" fill="#716F64" />
<rect x="554" y="681" width="13" height="12" fill="#FFFFFF" />
<rect x="555" y="682" width="12" height="11" fill="#ACA899" />
<rect x="555" y="682" width="11" height="10" fill="#ECE9D8" />
<polygon points="542,687 551,683 551,691" fill="#000" shape-rendering="geometricPrecision"/>
<polygon points="565,687 556,683 556,691" fill="#000" shape-rendering="geometricPrecision"/>
<rect x="614" y="709" width="393" height="16" fill="url(#dith)" />
<rect x="598" y="709" width="16" height="16" fill="#716F64" />
<rect x="598" y="709" width="15" height="15" fill="#FFFFFF" />
<rect x="599" y="710" width="14" height="14" fill="#ACA899" />
<rect x="599" y="710" width="13" height="13" fill="#ECE9D8" />
<polygon points="608.0,713 608.0,721 604.0,717" fill="#000" shape-rendering="geometricPrecision"/>
<rect x="1007" y="709" width="16" height="16" fill="#716F64" />
<rect x="1007" y="709" width="15" height="15" fill="#FFFFFF" />
<rect x="1008" y="710" width="14" height="14" fill="#ACA899" />
<rect x="1008" y="710" width="13" height="13" fill="#ECE9D8" />
<polygon points="1013.0,713 1013.0,721 1017.0,717" fill="#000" shape-rendering="geometricPrecision"/>
<rect x="922" y="709" width="62" height="16" fill="#716F64" />
<rect x="922" y="709" width="61" height="15" fill="#FFFFFF" />
<rect x="923" y="710" width="60" height="14" fill="#ACA899" />
<rect x="923" y="710" width="59" height="13" fill="#ECE9D8" />
<rect x="540" y="726" width="501" height="1" fill="#000"/>
<rect x="1023" y="496" width="16" height="185" fill="url(#dith)" />
<rect x="1023" y="496" width="16" height="15" fill="#716F64" />
<rect x="1023" y="496" width="15" height="14" fill="#FFFFFF" />
<rect x="1024" y="497" width="14" height="13" fill="#ACA899" />
<rect x="1024" y="497" width="13" height="12" fill="#ECE9D8" />
<polygon points="1027,506.0 1035,506.0 1031,502.0" fill="#000" shape-rendering="geometricPrecision"/>
<rect x="1023" y="587" width="16" height="19" fill="#716F64" />
<rect x="1023" y="587" width="15" height="18" fill="#FFFFFF" />
<rect x="1024" y="588" width="14" height="17" fill="#ACA899" />
<rect x="1024" y="588" width="13" height="16" fill="#ECE9D8" />
<rect x="1023" y="665" width="16" height="16" fill="#716F64" />
<rect x="1023" y="665" width="15" height="15" fill="#FFFFFF" />
<rect x="1024" y="666" width="14" height="14" fill="#ACA899" />
<rect x="1024" y="666" width="13" height="13" fill="#ECE9D8" />
<polygon points="1027,671.0 1035,671.0 1031,675.0" fill="#000" shape-rendering="geometricPrecision"/>
<rect x="1040" y="479" width="1" height="248" fill="#000"/>
<rect x="1047" y="483" width="46" height="226" fill="#FFFFFF" />
<rect x="1047" y="483" width="1" height="226" fill="#808080"/>
<rect x="1047" y="483" width="46" height="1" fill="#808080"/>
<rect x="1048" y="484" width="44" height="225" fill="#FFFFFF" />
<rect x="1048" y="483" width="44" height="16" fill="#FFFFFF" />
<rect x="1049" y="484" width="43" height="15" fill="#ACA899" />
<rect x="1049" y="484" width="42" height="14" fill="#ECE9D8" />
<text x="1070" y="496" font-size="11" text-anchor="middle" fill="#000" font-weight="normal" >Trace</text>
<rect x="1050" y="502" width="16" height="16" fill="#000" />
<text x="1068" y="515" font-size="11" text-anchor="start" fill="#000" font-weight="normal" >1</text>
<rect x="1048" y="519" width="43" height="17" fill="#ECE9D8" />
<rect x="1050" y="519" width="16" height="16" fill="#000" />
<rect x="1051" y="520" width="14" height="14" fill="#800000" />
<text x="1068" y="532" font-size="11" text-anchor="start" fill="#000" font-weight="normal" >2</text>
<rect x="1048" y="693" width="43" height="14" fill="#FCFCFE" />
<rect x="1048.5" y="693.5" width="14" height="13" rx="1.5" fill="#C3D3FD" stroke="#B6C8F4" shape-rendering="geometricPrecision"/>
<path d="M1057 696.5 L1053 700 L1057 703.5" stroke="#4D6185" stroke-width="2" fill="none" shape-rendering="geometricPrecision"/>
<rect x="1065.5" y="693.5" width="6" height="13" rx="1.5" fill="#C3D3FD" stroke="#B6C8F4" shape-rendering="geometricPrecision"/>
<rect x="1076.5" y="693.5" width="14" height="13" rx="1.5" fill="#C3D3FD" stroke="#B6C8F4" shape-rendering="geometricPrecision"/>
<path d="M1082 696.5 L1086 700 L1082 703.5" stroke="#4D6185" stroke-width="2" fill="none" shape-rendering="geometricPrecision"/>
<rect x="1076" y="711" width="16" height="16" fill="#716F64" />
<rect x="1076" y="711" width="15" height="15" fill="#FFFFFF" />
<rect x="1077" y="712" width="14" height="14" fill="#ACA899" />
<rect x="1077" y="712" width="13" height="13" fill="#ECE9D8" />
<path d="M1082 714 L1076 719 L1082 724 Z M1088 714 L1082 719 L1088 724 Z" fill="#000"/>
<polygon points="675.6,481.5 691.6,481.5 683.6,494.5" fill="#168A8A" stroke="#000" stroke-width="1.1" stroke-linejoin="miter" shape-rendering="geometricPrecision"/>
<text x="673.6" y="492" font-size="11" text-anchor="end" fill="#000" font-weight="normal" >1</text>
<polygon points="760,481.5 776,481.5 768,494.5" fill="#168A8A" stroke="#000" stroke-width="1.1" stroke-linejoin="miter" shape-rendering="geometricPrecision"/>
<text x="777" y="492" font-size="11" text-anchor="start" fill="#000" font-weight="normal" >2</text>
<polygon points="845.3,481.5 861.3,481.5 853.3,494.5" fill="#168A8A" stroke="#000" stroke-width="1.1" stroke-linejoin="miter" shape-rendering="geometricPrecision"/>
<text x="843.3" y="492" font-size="11" text-anchor="end" fill="#FF0000" font-weight="normal" >3</text>
<polygon points="930,481.5 946,481.5 938,494.5" fill="#168A8A" stroke="#000" stroke-width="1.1" stroke-linejoin="miter" shape-rendering="geometricPrecision"/>
<text x="947" y="492" font-size="11" text-anchor="start" fill="#000" font-weight="normal" >4</text>
<path d="M630.0 536.2 L632.4 545.4 L634.8 539.3 L637.0 535.9 L639.1 546.7 L641.8 543.2 L644.0 547.6 L646.2 542.6 L649.2 537.9 L651.5 534.7 L653.6 535.3 L656.5 546.2 L659.2 535.6 L661.2 545.5 L663.4 535.7 L665.7 535.7 L668.7 536.8 L671.4 544.3 L673.9 536.8 L676.9 542.7 L678.8 534.2 L681.0 546.1 L684.0 534.5 L686.5 544.9 L688.6 541.0 L691.4 548.4 L693.2 538.6 L695.2 546.4 L698.2 539.0 L701.1 543.1 L703.2 536.9 L705.7 547.4 L707.9 536.9 L709.7 543.7 L712.2 538.3 L714.3 547.6 L716.3 542.1 L718.6 544.5 L720.6 536.9 L722.6 543.1 L725.3 545.3 L728.1 542.9 L730.5 538.3 L733.2 542.9 L735.0 534.5 L737.2 546.5 L739.1 536.3 L742.0 544.6 L744.5 533.8 L746.7 541.7 L748.6 534.2 L751.0 535.8 L753.3 537.4 L755.4 542.2 L758.0 537.6 L760.1 545.3 L763.0 536.3 L765.7 545.8 L768.4 537.2 L771.0 544.3 L773.6 536.0 L775.4 544.6 L777.4 544.4 L780.3 544.0 L783.2 539.6 L785.8 548.6 L788.0 539.6 L790.6 543.5 L792.9 538.8 L795.4 544.6 L797.5 539.2 L800.3 543.4 L802.7 536.0 L804.8 541.4 L807.0 537.0 L808.9 545.1 L810.8 536.5 L812.9 547.4 L815.7 538.6 L818.6 543.5 L820.5 537.9 L822.8 545.4 L825.1 536.2 L826.9 545.2 L829.0 541.8 L831.4 543.2 L833.3 539.1 L835.9 544.4 L838.7 544.6 L841.2 546.7 L843.5 535.7 L846.4 546.6 L849.3 535.6 L851.6 547.9 L853.4 537.7 L856.1 548.1 L858.5 536.8 L861.0 548.9 L863.2 539.5 L865.7 544.4 L867.5 540.5 L870.1 535.2 L872.6 540.3 L874.6 546.9 L877.3 538.7 L879.6 545.8 L881.9 536.4 L884.7 547.6 L887.0 545.7 L889.5 543.7 L891.5 538.4 L893.4 545.3 L895.8 537.1 L898.4 545.4 L900.5 537.0 L902.5 545.0 L904.7 537.8 L906.8 545.5 L908.9 540.3 L911.5 544.9 L913.5 545.5 L915.8 544.5 L917.6 537.6 L920.0 546.8 L922.6 536.8 L925.2 544.0 L927.9 536.8 L930.0 542.6 L932.4 537.3 L934.6 537.6 L936.5 538.3 L938.5 537.7 L941.2 536.5 L943.1 541.8 L945.1 536.8 L947.7 542.5 M955.6 533.4 L958.3 545.8 L960.2 536.8 L962.7 545.3 L965.2 539.1 L967.4 545.0 L970.1 537.6 L972.7 543.0 L975.5 535.8 L977.9 543.0 L980.3 538.2 L983.2 542.0" stroke="#800000" fill="none" stroke-linejoin="bevel" shape-rendering="crispEdges"/>
<path d="M630.0 608.8 L633.0 612.8 L635.2 604.8 L637.4 613.8 L640.3 614.8 L642.8 613.9 L645.3 605.1 L647.8 612.4 L650.7 604.4 L653.3 612.4 L655.3 606.5 L658.3 610.9 L660.8 606.6 L663.3 612.1 L665.7 607.7 L668.7 611.6 L671.6 607.1 L673.5 613.8 L675.7 607.8 L677.6 613.3 L679.6 612.6 L682.4 615.1 L684.8 604.9 L687.5 613.5 L689.7 606.5 L692.6 612.4 L694.8 605.2 L697.0 609.9 L698.9 602.5 L700.9 604.2 L703.0 602.5 L705.8 611.5 L707.6 604.2 L710.3 610.1 L712.4 611.6 L714.4 610.3 L716.8 612.3 L718.6 606.0 L721.6 607.0 L723.6 614.0 L725.4 607.3 L728.1 612.5 L731.0 607.4 L733.0 614.2 L735.7 608.1 L738.6 614.7 L740.6 612.3 L742.7 611.2 L745.2 606.8 L747.9 612.7 L750.7 610.9 L752.7 614.2 L755.0 607.1 L757.9 615.2 L760.7 608.0 L762.8 611.3 L764.6 611.5 L766.8 610.8 L769.0 605.6 L771.9 611.3 L774.8 608.1 L776.9 610.4 L779.9 612.8 L782.7 607.0 L784.9 607.3 L787.5 613.3 L790.1 607.5 L792.0 612.3 L794.0 604.5 L795.9 611.7 L798.0 607.2 L800.2 612.4 L803.1 607.4 L806.0 613.3 L808.6 607.8 L811.1 611.9 L814.0 606.6 L816.0 606.2 L818.2 606.3 L820.8 611.9 L823.4 611.6 L826.2 611.2 L828.2 604.3 L830.2 609.1 L832.5 604.0 L834.6 608.5 L836.5 603.5 L839.4 610.6 L842.1 604.8 L844.0 609.3 L846.8 604.1 L849.5 614.1 L852.4 607.5 L854.9 612.0 L857.5 607.9 L860.0 611.2 L862.8 607.6 L864.8 612.7 L867.3 604.0 L869.6 609.5 L871.6 612.5 L873.7 610.1 L876.6 604.9 L879.0 610.8 L881.8 611.9 L883.7 611.4 L885.7 604.3 L888.1 611.4 L890.2 606.0 L892.9 610.3 L894.8 603.1 L896.8 609.7 L899.8 607.7 L902.1 606.3 L904.9 604.1 L907.6 611.5 L909.6 606.1 L911.4 604.6 L913.5 606.3 L915.5 612.7 L917.9 611.4 L920.6 605.9 L923.4 611.1 L926.3 612.3 L928.2 603.3 L931.0 610.4 L933.0 602.5 L935.1 612.2 L937.9 603.3 L940.5 612.3 L942.6 610.7 L945.4 612.7 L947.3 605.1 L949.9 612.8 M955.0 606.8 L957.3 612.4 L960.2 606.0 L962.6 605.6 L965.3 608.5 L968.0 613.8 L970.3 610.8 L972.3 609.7 L974.2 602.5 L976.9 612.4 L978.9 602.8 L981.0 613.8 L983.7 605.1" stroke="#800000" fill="none" stroke-linejoin="bevel" shape-rendering="crispEdges"/>
<rect x="147.0" y="103.0" width="4" height="4" fill="#000000" opacity="0.47" transform="rotate(-2.5 149.0 105.0)" shape-rendering="geometricPrecision"/>
<rect x="147.3" y="111.0" width="4" height="4" fill="#000000" opacity="0.47" transform="rotate(-2.5 149.3 113.0)" shape-rendering="geometricPrecision"/>
<rect x="147.7" y="119.0" width="4" height="4" fill="#000000" opacity="0.47" transform="rotate(-2.5 149.7 121.0)" shape-rendering="geometricPrecision"/>
<rect x="148.0" y="127.0" width="4" height="4" fill="#000000" opacity="0.47" transform="rotate(-2.5 150.0 129.0)" shape-rendering="geometricPrecision"/>
<rect x="148.4" y="135.0" width="4" height="4" fill="#000000" opacity="0.47" transform="rotate(-2.5 150.4 137.0)" shape-rendering="geometricPrecision"/>
<rect x="148.7" y="143.0" width="4" height="4" fill="#000000" opacity="0.47" transform="rotate(-2.5 150.7 145.0)" shape-rendering="geometricPrecision"/>
<rect x="149.1" y="151.0" width="4" height="4" fill="#000000" opacity="0.47" transform="rotate(-2.5 151.1 153.0)" shape-rendering="geometricPrecision"/>
<rect x="149.4" y="158.9" width="4" height="4" fill="#000000" opacity="0.47" transform="rotate(-2.5 151.4 160.9)" shape-rendering="geometricPrecision"/>
<rect x="149.7" y="166.9" width="4" height="4" fill="#000000" opacity="0.47" transform="rotate(-2.5 151.7 168.9)" shape-rendering="geometricPrecision"/>
<rect x="150.1" y="174.9" width="4" height="4" fill="#000000" opacity="0.47" transform="rotate(-2.5 152.1 176.9)" shape-rendering="geometricPrecision"/>
<rect x="150.4" y="182.9" width="4" height="4" fill="#000000" opacity="0.47" transform="rotate(-2.5 152.4 184.9)" shape-rendering="geometricPrecision"/>
<rect x="150.8" y="190.9" width="4" height="4" fill="#000000" opacity="0.47" transform="rotate(-2.5 152.8 192.9)" shape-rendering="geometricPrecision"/>
<rect x="151.1" y="198.9" width="4" height="4" fill="#000000" opacity="0.47" transform="rotate(-2.5 153.1 200.9)" shape-rendering="geometricPrecision"/>
<rect x="151.4" y="206.9" width="4" height="4" fill="#000000" opacity="0.47" transform="rotate(-2.5 153.4 208.9)" shape-rendering="geometricPrecision"/>
<rect x="151.8" y="214.9" width="4" height="4" fill="#000000" opacity="0.47" transform="rotate(-2.5 153.8 216.9)" shape-rendering="geometricPrecision"/>
<rect x="152.1" y="222.9" width="4" height="4" fill="#000000" opacity="0.47" transform="rotate(-2.5 154.1 224.9)" shape-rendering="geometricPrecision"/>
<rect x="152.5" y="230.9" width="4" height="4" fill="#000000" opacity="0.47" transform="rotate(-2.5 154.5 232.9)" shape-rendering="geometricPrecision"/>
<rect x="152.8" y="238.9" width="4" height="4" fill="#000000" opacity="0.47" transform="rotate(-2.5 154.8 240.9)" shape-rendering="geometricPrecision"/>
<rect x="153.2" y="246.9" width="4" height="4" fill="#000000" opacity="0.47" transform="rotate(-2.5 155.2 248.9)" shape-rendering="geometricPrecision"/>
<rect x="153.5" y="254.9" width="4" height="4" fill="#000000" opacity="0.47" transform="rotate(-2.5 155.5 256.9)" shape-rendering="geometricPrecision"/>
<rect x="153.8" y="262.9" width="4" height="4" fill="#000000" opacity="0.47" transform="rotate(-2.5 155.8 264.9)" shape-rendering="geometricPrecision"/>
<rect x="154.2" y="270.8" width="4" height="4" fill="#000000" opacity="0.47" transform="rotate(-2.5 156.2 272.8)" shape-rendering="geometricPrecision"/>
<rect x="154.5" y="278.8" width="4" height="4" fill="#000000" opacity="0.47" transform="rotate(-2.5 156.5 280.8)" shape-rendering="geometricPrecision"/>
<rect x="154.9" y="286.8" width="4" height="4" fill="#000000" opacity="0.47" transform="rotate(-2.5 156.9 288.8)" shape-rendering="geometricPrecision"/>
<rect x="155.2" y="294.8" width="4" height="4" fill="#000000" opacity="0.47" transform="rotate(-2.5 157.2 296.8)" shape-rendering="geometricPrecision"/>
<rect x="155.5" y="302.8" width="4" height="4" fill="#000000" opacity="0.47" transform="rotate(-2.5 157.5 304.8)" shape-rendering="geometricPrecision"/>
<rect x="155.9" y="310.8" width="4" height="4" fill="#000000" opacity="0.47" transform="rotate(-2.5 157.9 312.8)" shape-rendering="geometricPrecision"/>
<rect x="156.2" y="318.8" width="4" height="4" fill="#000000" opacity="0.47" transform="rotate(-2.5 158.2 320.8)" shape-rendering="geometricPrecision"/>
<rect x="156.6" y="326.8" width="4" height="4" fill="#000000" opacity="0.47" transform="rotate(-2.5 158.6 328.8)" shape-rendering="geometricPrecision"/>
<rect x="156.9" y="334.8" width="4" height="4" fill="#000000" opacity="0.47" transform="rotate(-2.5 158.9 336.8)" shape-rendering="geometricPrecision"/>
<rect x="157.3" y="342.8" width="4" height="4" fill="#000000" opacity="0.47" transform="rotate(-2.5 159.3 344.8)" shape-rendering="geometricPrecision"/>
<rect x="157.6" y="350.8" width="4" height="4" fill="#000000" opacity="0.47" transform="rotate(-2.5 159.6 352.8)" shape-rendering="geometricPrecision"/>
<rect x="157.9" y="358.8" width="4" height="4" fill="#000000" opacity="0.47" transform="rotate(-2.5 159.9 360.8)" shape-rendering="geometricPrecision"/>
<rect x="158.3" y="366.8" width="4" height="4" fill="#000000" opacity="0.47" transform="rotate(-2.5 160.3 368.8)" shape-rendering="geometricPrecision"/>
<rect x="158.6" y="374.8" width="4" height="4" fill="#000000" opacity="0.47" transform="rotate(-2.5 160.6 376.8)" shape-rendering="geometricPrecision"/>
<rect x="159.0" y="382.7" width="4" height="4" fill="#000000" opacity="0.47" transform="rotate(-2.5 161.0 384.7)" shape-rendering="geometricPrecision"/>
<rect x="159.3" y="390.7" width="4" height="4" fill="#000000" opacity="0.47" transform="rotate(-2.5 161.3 392.7)" shape-rendering="geometricPrecision"/>
<rect x="159.7" y="398.7" width="4" height="4" fill="#000000" opacity="0.47" transform="rotate(-2.5 161.7 400.7)" shape-rendering="geometricPrecision"/>
<rect x="160.0" y="406.7" width="4" height="4" fill="#000000" opacity="0.47" transform="rotate(-2.5 162.0 408.7)" shape-rendering="geometricPrecision"/>
<rect x="160.3" y="414.7" width="4" height="4" fill="#000000" opacity="0.47" transform="rotate(-2.5 162.3 416.7)" shape-rendering="geometricPrecision"/>
<rect x="160.7" y="422.7" width="4" height="4" fill="#000000" opacity="0.47" transform="rotate(-2.5 162.7 424.7)" shape-rendering="geometricPrecision"/>
<rect x="161.0" y="430.7" width="4" height="4" fill="#000000" opacity="0.47" transform="rotate(-2.5 163.0 432.7)" shape-rendering="geometricPrecision"/>
<rect x="161.4" y="438.7" width="4" height="4" fill="#000000" opacity="0.47" transform="rotate(-2.5 163.4 440.7)" shape-rendering="geometricPrecision"/>
<rect x="161.7" y="446.7" width="4" height="4" fill="#000000" opacity="0.47" transform="rotate(-2.5 163.7 448.7)" shape-rendering="geometricPrecision"/>
<rect x="162.0" y="454.7" width="4" height="4" fill="#000000" opacity="0.47" transform="rotate(-2.5 164.0 456.7)" shape-rendering="geometricPrecision"/>
<rect x="162.4" y="462.7" width="4" height="4" fill="#000000" opacity="0.47" transform="rotate(-2.5 164.4 464.7)" shape-rendering="geometricPrecision"/>
<rect x="162.7" y="470.7" width="4" height="4" fill="#000000" opacity="0.47" transform="rotate(-2.5 164.7 472.7)" shape-rendering="geometricPrecision"/>
<rect x="163.1" y="478.7" width="4" height="4" fill="#000000" opacity="0.47" transform="rotate(-2.5 165.1 480.7)" shape-rendering="geometricPrecision"/>
<rect x="163.4" y="486.6" width="4" height="4" fill="#000000" opacity="0.47" transform="rotate(-2.5 165.4 488.6)" shape-rendering="geometricPrecision"/>
<rect x="163.8" y="494.6" width="4" height="4" fill="#000000" opacity="0.47" transform="rotate(-2.5 165.8 496.6)" shape-rendering="geometricPrecision"/>
<rect x="164.1" y="502.6" width="4" height="4" fill="#000000" opacity="0.47" transform="rotate(-2.5 166.1 504.6)" shape-rendering="geometricPrecision"/>
<rect x="164.4" y="510.6" width="4" height="4" fill="#000000" opacity="0.47" transform="rotate(-2.5 166.4 512.6)" shape-rendering="geometricPrecision"/>
<polygon points="166.8,535.0 156.5,515.4 166.2,520.0 175.4,514.6" fill="#000000" opacity="0.47" shape-rendering="geometricPrecision"/>
<rect x="149.3" y="107.0" width="4" height="4" fill="#000000" opacity="0.47" transform="rotate(-4.0 151.3 109.0)" shape-rendering="geometricPrecision"/>
<rect x="149.8" y="115.0" width="4" height="4" fill="#000000" opacity="0.47" transform="rotate(-4.0 151.8 117.0)" shape-rendering="geometricPrecision"/>
<rect x="150.4" y="123.0" width="4" height="4" fill="#000000" opacity="0.47" transform="rotate(-4.0 152.4 125.0)" shape-rendering="geometricPrecision"/>
<rect x="151.0" y="130.9" width="4" height="4" fill="#000000" opacity="0.47" transform="rotate(-4.0 153.0 132.9)" shape-rendering="geometricPrecision"/>
<rect x="151.5" y="138.9" width="4" height="4" fill="#000000" opacity="0.47" transform="rotate(-4.0 153.5 140.9)" shape-rendering="geometricPrecision"/>
<rect x="152.1" y="146.9" width="4" height="4" fill="#000000" opacity="0.47" transform="rotate(-4.0 154.1 148.9)" shape-rendering="geometricPrecision"/>
<rect x="152.6" y="154.9" width="4" height="4" fill="#000000" opacity="0.47" transform="rotate(-4.0 154.6 156.9)" shape-rendering="geometricPrecision"/>
<rect x="153.2" y="162.9" width="4" height="4" fill="#000000" opacity="0.47" transform="rotate(-4.0 155.2 164.9)" shape-rendering="geometricPrecision"/>
<rect x="153.8" y="170.8" width="4" height="4" fill="#000000" opacity="0.47" transform="rotate(-4.0 155.8 172.8)" shape-rendering="geometricPrecision"/>
<rect x="154.3" y="178.8" width="4" height="4" fill="#000000" opacity="0.47" transform="rotate(-4.0 156.3 180.8)" shape-rendering="geometricPrecision"/>
<rect x="154.9" y="186.8" width="4" height="4" fill="#000000" opacity="0.47" transform="rotate(-4.0 156.9 188.8)" shape-rendering="geometricPrecision"/>
<rect x="155.4" y="194.8" width="4" height="4" fill="#000000" opacity="0.47" transform="rotate(-4.0 157.4 196.8)" shape-rendering="geometricPrecision"/>
<rect x="156.0" y="202.8" width="4" height="4" fill="#000000" opacity="0.47" transform="rotate(-4.0 158.0 204.8)" shape-rendering="geometricPrecision"/>
<rect x="156.6" y="210.7" width="4" height="4" fill="#000000" opacity="0.47" transform="rotate(-4.0 158.6 212.7)" shape-rendering="geometricPrecision"/>
<rect x="157.1" y="218.7" width="4" height="4" fill="#000000" opacity="0.47" transform="rotate(-4.0 159.1 220.7)" shape-rendering="geometricPrecision"/>
<rect x="157.7" y="226.7" width="4" height="4" fill="#000000" opacity="0.47" transform="rotate(-4.0 159.7 228.7)" shape-rendering="geometricPrecision"/>
<rect x="158.2" y="234.7" width="4" height="4" fill="#000000" opacity="0.47" transform="rotate(-4.0 160.2 236.7)" shape-rendering="geometricPrecision"/>
<rect x="158.8" y="242.7" width="4" height="4" fill="#000000" opacity="0.47" transform="rotate(-4.0 160.8 244.7)" shape-rendering="geometricPrecision"/>
<rect x="159.4" y="250.6" width="4" height="4" fill="#000000" opacity="0.47" transform="rotate(-4.0 161.4 252.6)" shape-rendering="geometricPrecision"/>
<rect x="159.9" y="258.6" width="4" height="4" fill="#000000" opacity="0.47" transform="rotate(-4.0 161.9 260.6)" shape-rendering="geometricPrecision"/>
<rect x="160.5" y="266.6" width="4" height="4" fill="#000000" opacity="0.47" transform="rotate(-4.0 162.5 268.6)" shape-rendering="geometricPrecision"/>
<rect x="161.1" y="274.6" width="4" height="4" fill="#000000" opacity="0.47" transform="rotate(-4.0 163.1 276.6)" shape-rendering="geometricPrecision"/>
<rect x="161.6" y="282.6" width="4" height="4" fill="#000000" opacity="0.47" transform="rotate(-4.0 163.6 284.6)" shape-rendering="geometricPrecision"/>
<rect x="162.2" y="290.5" width="4" height="4" fill="#000000" opacity="0.47" transform="rotate(-4.0 164.2 292.5)" shape-rendering="geometricPrecision"/>
<rect x="162.7" y="298.5" width="4" height="4" fill="#000000" opacity="0.47" transform="rotate(-4.0 164.7 300.5)" shape-rendering="geometricPrecision"/>
<rect x="163.3" y="306.5" width="4" height="4" fill="#000000" opacity="0.47" transform="rotate(-4.0 165.3 308.5)" shape-rendering="geometricPrecision"/>
<rect x="163.9" y="314.5" width="4" height="4" fill="#000000" opacity="0.47" transform="rotate(-4.0 165.9 316.5)" shape-rendering="geometricPrecision"/>
<rect x="164.4" y="322.5" width="4" height="4" fill="#000000" opacity="0.47" transform="rotate(-4.0 166.4 324.5)" shape-rendering="geometricPrecision"/>
<rect x="165.0" y="330.4" width="4" height="4" fill="#000000" opacity="0.47" transform="rotate(-4.0 167.0 332.4)" shape-rendering="geometricPrecision"/>
<rect x="165.5" y="338.4" width="4" height="4" fill="#000000" opacity="0.47" transform="rotate(-4.0 167.5 340.4)" shape-rendering="geometricPrecision"/>
<rect x="166.1" y="346.4" width="4" height="4" fill="#000000" opacity="0.47" transform="rotate(-4.0 168.1 348.4)" shape-rendering="geometricPrecision"/>
<rect x="166.7" y="354.4" width="4" height="4" fill="#000000" opacity="0.47" transform="rotate(-4.0 168.7 356.4)" shape-rendering="geometricPrecision"/>
<rect x="167.2" y="362.4" width="4" height="4" fill="#000000" opacity="0.47" transform="rotate(-4.0 169.2 364.4)" shape-rendering="geometricPrecision"/>
<rect x="167.8" y="370.3" width="4" height="4" fill="#000000" opacity="0.47" transform="rotate(-4.0 169.8 372.3)" shape-rendering="geometricPrecision"/>
<rect x="168.3" y="378.3" width="4" height="4" fill="#000000" opacity="0.47" transform="rotate(-4.0 170.3 380.3)" shape-rendering="geometricPrecision"/>
<rect x="168.9" y="386.3" width="4" height="4" fill="#000000" opacity="0.47" transform="rotate(-4.0 170.9 388.3)" shape-rendering="geometricPrecision"/>
<rect x="169.5" y="394.3" width="4" height="4" fill="#000000" opacity="0.47" transform="rotate(-4.0 171.5 396.3)" shape-rendering="geometricPrecision"/>
<rect x="170.0" y="402.3" width="4" height="4" fill="#000000" opacity="0.47" transform="rotate(-4.0 172.0 404.3)" shape-rendering="geometricPrecision"/>
<rect x="170.6" y="410.2" width="4" height="4" fill="#000000" opacity="0.47" transform="rotate(-4.0 172.6 412.2)" shape-rendering="geometricPrecision"/>
<rect x="171.1" y="418.2" width="4" height="4" fill="#000000" opacity="0.47" transform="rotate(-4.0 173.1 420.2)" shape-rendering="geometricPrecision"/>
<rect x="171.7" y="426.2" width="4" height="4" fill="#000000" opacity="0.47" transform="rotate(-4.0 173.7 428.2)" shape-rendering="geometricPrecision"/>
<rect x="172.3" y="434.2" width="4" height="4" fill="#000000" opacity="0.47" transform="rotate(-4.0 174.3 436.2)" shape-rendering="geometricPrecision"/>
<rect x="172.8" y="442.2" width="4" height="4" fill="#000000" opacity="0.47" transform="rotate(-4.0 174.8 444.2)" shape-rendering="geometricPrecision"/>
<rect x="173.4" y="450.1" width="4" height="4" fill="#000000" opacity="0.47" transform="rotate(-4.0 175.4 452.1)" shape-rendering="geometricPrecision"/>
<rect x="173.9" y="458.1" width="4" height="4" fill="#000000" opacity="0.47" transform="rotate(-4.0 175.9 460.1)" shape-rendering="geometricPrecision"/>
<rect x="174.5" y="466.1" width="4" height="4" fill="#000000" opacity="0.47" transform="rotate(-4.0 176.5 468.1)" shape-rendering="geometricPrecision"/>
<rect x="175.1" y="474.1" width="4" height="4" fill="#000000" opacity="0.47" transform="rotate(-4.0 177.1 476.1)" shape-rendering="geometricPrecision"/>
<rect x="175.6" y="482.1" width="4" height="4" fill="#000000" opacity="0.47" transform="rotate(-4.0 177.6 484.1)" shape-rendering="geometricPrecision"/>
<rect x="176.2" y="490.0" width="4" height="4" fill="#000000" opacity="0.47" transform="rotate(-4.0 178.2 492.0)" shape-rendering="geometricPrecision"/>
<rect x="176.7" y="498.0" width="4" height="4" fill="#000000" opacity="0.47" transform="rotate(-4.0 178.7 500.0)" shape-rendering="geometricPrecision"/>
<rect x="177.3" y="506.0" width="4" height="4" fill="#000000" opacity="0.47" transform="rotate(-4.0 179.3 508.0)" shape-rendering="geometricPrecision"/>
<rect x="177.9" y="514.0" width="4" height="4" fill="#000000" opacity="0.47" transform="rotate(-4.0 179.9 516.0)" shape-rendering="geometricPrecision"/>
<rect x="178.4" y="522.0" width="4" height="4" fill="#000000" opacity="0.47" transform="rotate(-4.0 180.4 524.0)" shape-rendering="geometricPrecision"/>
<rect x="179.0" y="529.9" width="4" height="4" fill="#000000" opacity="0.47" transform="rotate(-4.0 181.0 531.9)" shape-rendering="geometricPrecision"/>
<rect x="179.6" y="537.9" width="4" height="4" fill="#000000" opacity="0.47" transform="rotate(-4.0 181.6 539.9)" shape-rendering="geometricPrecision"/>
<rect x="180.1" y="545.9" width="4" height="4" fill="#000000" opacity="0.47" transform="rotate(-4.0 182.1 547.9)" shape-rendering="geometricPrecision"/>
<rect x="180.7" y="553.9" width="4" height="4" fill="#000000" opacity="0.47" transform="rotate(-4.0 182.7 555.9)" shape-rendering="geometricPrecision"/>
<rect x="181.2" y="561.9" width="4" height="4" fill="#000000" opacity="0.47" transform="rotate(-4.0 183.2 563.9)" shape-rendering="geometricPrecision"/>
<rect x="181.8" y="569.8" width="4" height="4" fill="#000000" opacity="0.47" transform="rotate(-4.0 183.8 571.8)" shape-rendering="geometricPrecision"/>
<rect x="182.4" y="577.8" width="4" height="4" fill="#000000" opacity="0.47" transform="rotate(-4.0 184.4 579.8)" shape-rendering="geometricPrecision"/>
<rect x="182.9" y="585.8" width="4" height="4" fill="#000000" opacity="0.47" transform="rotate(-4.0 184.9 587.8)" shape-rendering="geometricPrecision"/>
<polygon points="186.0,609.0 175.1,589.7 184.9,594.0 194.1,588.4" fill="#000000" opacity="0.47" shape-rendering="geometricPrecision"/>
<rect x="272.0" y="372.0" width="4" height="4" fill="#800000" opacity="0.52" transform="rotate(-64.9 274.0 374.0)" shape-rendering="geometricPrecision"/>
<rect x="279.2" y="375.4" width="4" height="4" fill="#800000" opacity="0.52" transform="rotate(-64.9 281.2 377.4)" shape-rendering="geometricPrecision"/>
<rect x="286.5" y="378.8" width="4" height="4" fill="#800000" opacity="0.52" transform="rotate(-64.9 288.5 380.8)" shape-rendering="geometricPrecision"/>
<rect x="293.7" y="382.2" width="4" height="4" fill="#800000" opacity="0.52" transform="rotate(-64.9 295.7 384.2)" shape-rendering="geometricPrecision"/>
<rect x="301.0" y="385.6" width="4" height="4" fill="#800000" opacity="0.52" transform="rotate(-64.9 303.0 387.6)" shape-rendering="geometricPrecision"/>
<rect x="308.2" y="389.0" width="4" height="4" fill="#800000" opacity="0.52" transform="rotate(-64.9 310.2 391.0)" shape-rendering="geometricPrecision"/>
<rect x="315.5" y="392.4" width="4" height="4" fill="#800000" opacity="0.52" transform="rotate(-64.9 317.5 394.4)" shape-rendering="geometricPrecision"/>
<rect x="322.7" y="395.8" width="4" height="4" fill="#800000" opacity="0.52" transform="rotate(-64.9 324.7 397.8)" shape-rendering="geometricPrecision"/>
<rect x="329.9" y="399.2" width="4" height="4" fill="#800000" opacity="0.52" transform="rotate(-64.9 331.9 401.2)" shape-rendering="geometricPrecision"/>
<rect x="337.2" y="402.6" width="4" height="4" fill="#800000" opacity="0.52" transform="rotate(-64.9 339.2 404.6)" shape-rendering="geometricPrecision"/>
<rect x="344.4" y="406.0" width="4" height="4" fill="#800000" opacity="0.52" transform="rotate(-64.9 346.4 408.0)" shape-rendering="geometricPrecision"/>
<rect x="351.7" y="409.4" width="4" height="4" fill="#800000" opacity="0.52" transform="rotate(-64.9 353.7 411.4)" shape-rendering="geometricPrecision"/>
<rect x="358.9" y="412.8" width="4" height="4" fill="#800000" opacity="0.52" transform="rotate(-64.9 360.9 414.8)" shape-rendering="geometricPrecision"/>
<rect x="366.2" y="416.1" width="4" height="4" fill="#800000" opacity="0.52" transform="rotate(-64.9 368.2 418.1)" shape-rendering="geometricPrecision"/>
<rect x="373.4" y="419.5" width="4" height="4" fill="#800000" opacity="0.52" transform="rotate(-64.9 375.4 421.5)" shape-rendering="geometricPrecision"/>
<rect x="380.7" y="422.9" width="4" height="4" fill="#800000" opacity="0.52" transform="rotate(-64.9 382.7 424.9)" shape-rendering="geometricPrecision"/>
<rect x="387.9" y="426.3" width="4" height="4" fill="#800000" opacity="0.52" transform="rotate(-64.9 389.9 428.3)" shape-rendering="geometricPrecision"/>
<rect x="395.1" y="429.7" width="4" height="4" fill="#800000" opacity="0.52" transform="rotate(-64.9 397.1 431.7)" shape-rendering="geometricPrecision"/>
<rect x="402.4" y="433.1" width="4" height="4" fill="#800000" opacity="0.52" transform="rotate(-64.9 404.4 435.1)" shape-rendering="geometricPrecision"/>
<rect x="409.6" y="436.5" width="4" height="4" fill="#800000" opacity="0.52" transform="rotate(-64.9 411.6 438.5)" shape-rendering="geometricPrecision"/>
<rect x="416.9" y="439.9" width="4" height="4" fill="#800000" opacity="0.52" transform="rotate(-64.9 418.9 441.9)" shape-rendering="geometricPrecision"/>
<rect x="424.1" y="443.3" width="4" height="4" fill="#800000" opacity="0.52" transform="rotate(-64.9 426.1 445.3)" shape-rendering="geometricPrecision"/>
<rect x="431.4" y="446.7" width="4" height="4" fill="#800000" opacity="0.52" transform="rotate(-64.9 433.4 448.7)" shape-rendering="geometricPrecision"/>
<rect x="438.6" y="450.1" width="4" height="4" fill="#800000" opacity="0.52" transform="rotate(-64.9 440.6 452.1)" shape-rendering="geometricPrecision"/>
<rect x="445.8" y="453.5" width="4" height="4" fill="#800000" opacity="0.52" transform="rotate(-64.9 447.8 455.5)" shape-rendering="geometricPrecision"/>
<rect x="453.1" y="456.9" width="4" height="4" fill="#800000" opacity="0.52" transform="rotate(-64.9 455.1 458.9)" shape-rendering="geometricPrecision"/>
<rect x="460.3" y="460.3" width="4" height="4" fill="#800000" opacity="0.52" transform="rotate(-64.9 462.3 462.3)" shape-rendering="geometricPrecision"/>
<rect x="467.6" y="463.7" width="4" height="4" fill="#800000" opacity="0.52" transform="rotate(-64.9 469.6 465.7)" shape-rendering="geometricPrecision"/>
<rect x="474.8" y="467.1" width="4" height="4" fill="#800000" opacity="0.52" transform="rotate(-64.9 476.8 469.1)" shape-rendering="geometricPrecision"/>
<rect x="482.1" y="470.5" width="4" height="4" fill="#800000" opacity="0.52" transform="rotate(-64.9 484.1 472.5)" shape-rendering="geometricPrecision"/>
<rect x="489.3" y="473.9" width="4" height="4" fill="#800000" opacity="0.52" transform="rotate(-64.9 491.3 475.9)" shape-rendering="geometricPrecision"/>
<rect x="496.5" y="477.3" width="4" height="4" fill="#800000" opacity="0.52" transform="rotate(-64.9 498.5 479.3)" shape-rendering="geometricPrecision"/>
<rect x="503.8" y="480.7" width="4" height="4" fill="#800000" opacity="0.52" transform="rotate(-64.9 505.8 482.7)" shape-rendering="geometricPrecision"/>
<rect x="511.0" y="484.1" width="4" height="4" fill="#800000" opacity="0.52" transform="rotate(-64.9 513.0 486.1)" shape-rendering="geometricPrecision"/>
<rect x="518.3" y="487.5" width="4" height="4" fill="#800000" opacity="0.52" transform="rotate(-64.9 520.3 489.5)" shape-rendering="geometricPrecision"/>
<rect x="525.5" y="490.9" width="4" height="4" fill="#800000" opacity="0.52" transform="rotate(-64.9 527.5 492.9)" shape-rendering="geometricPrecision"/>
<rect x="532.8" y="494.3" width="4" height="4" fill="#800000" opacity="0.52" transform="rotate(-64.9 534.8 496.3)" shape-rendering="geometricPrecision"/>
<rect x="540.0" y="497.7" width="4" height="4" fill="#800000" opacity="0.52" transform="rotate(-64.9 542.0 499.7)" shape-rendering="geometricPrecision"/>
<rect x="547.2" y="501.0" width="4" height="4" fill="#800000" opacity="0.52" transform="rotate(-64.9 549.2 503.0)" shape-rendering="geometricPrecision"/>
<rect x="554.5" y="504.4" width="4" height="4" fill="#800000" opacity="0.52" transform="rotate(-64.9 556.5 506.4)" shape-rendering="geometricPrecision"/>
<rect x="561.7" y="507.8" width="4" height="4" fill="#800000" opacity="0.52" transform="rotate(-64.9 563.7 509.8)" shape-rendering="geometricPrecision"/>
<rect x="569.0" y="511.2" width="4" height="4" fill="#800000" opacity="0.52" transform="rotate(-64.9 571.0 513.2)" shape-rendering="geometricPrecision"/>
<rect x="576.2" y="514.6" width="4" height="4" fill="#800000" opacity="0.52" transform="rotate(-64.9 578.2 516.6)" shape-rendering="geometricPrecision"/>
<rect x="583.5" y="518.0" width="4" height="4" fill="#800000" opacity="0.52" transform="rotate(-64.9 585.5 520.0)" shape-rendering="geometricPrecision"/>
<rect x="590.7" y="521.4" width="4" height="4" fill="#800000" opacity="0.52" transform="rotate(-64.9 592.7 523.4)" shape-rendering="geometricPrecision"/>
<rect x="598.0" y="524.8" width="4" height="4" fill="#800000" opacity="0.52" transform="rotate(-64.9 600.0 526.8)" shape-rendering="geometricPrecision"/>
<rect x="605.2" y="528.2" width="4" height="4" fill="#800000" opacity="0.52" transform="rotate(-64.9 607.2 530.2)" shape-rendering="geometricPrecision"/>
<polygon points="627.0,539.0 604.9,539.1 613.4,532.6 612.9,521.9" fill="#800000" opacity="0.45" shape-rendering="geometricPrecision"/>
<rect x="275.4" y="376.2" width="4" height="4" fill="#800000" opacity="0.52" transform="rotate(-57.3 277.4 378.2)" shape-rendering="geometricPrecision"/>
<rect x="282.1" y="380.5" width="4" height="4" fill="#800000" opacity="0.52" transform="rotate(-57.3 284.1 382.5)" shape-rendering="geometricPrecision"/>
<rect x="288.8" y="384.8" width="4" height="4" fill="#800000" opacity="0.52" transform="rotate(-57.3 290.8 386.8)" shape-rendering="geometricPrecision"/>
<rect x="295.6" y="389.1" width="4" height="4" fill="#800000" opacity="0.52" transform="rotate(-57.3 297.6 391.1)" shape-rendering="geometricPrecision"/>
<rect x="302.3" y="393.5" width="4" height="4" fill="#800000" opacity="0.52" transform="rotate(-57.3 304.3 395.5)" shape-rendering="geometricPrecision"/>
<rect x="309.0" y="397.8" width="4" height="4" fill="#800000" opacity="0.52" transform="rotate(-57.3 311.0 399.8)" shape-rendering="geometricPrecision"/>
<rect x="315.8" y="402.1" width="4" height="4" fill="#800000" opacity="0.52" transform="rotate(-57.3 317.8 404.1)" shape-rendering="geometricPrecision"/>
<rect x="322.5" y="406.4" width="4" height="4" fill="#800000" opacity="0.52" transform="rotate(-57.3 324.5 408.4)" shape-rendering="geometricPrecision"/>
<rect x="329.2" y="410.7" width="4" height="4" fill="#800000" opacity="0.52" transform="rotate(-57.3 331.2 412.7)" shape-rendering="geometricPrecision"/>
<rect x="335.9" y="415.1" width="4" height="4" fill="#800000" opacity="0.52" transform="rotate(-57.3 337.9 417.1)" shape-rendering="geometricPrecision"/>
<rect x="342.7" y="419.4" width="4" height="4" fill="#800000" opacity="0.52" transform="rotate(-57.3 344.7 421.4)" shape-rendering="geometricPrecision"/>
<rect x="349.4" y="423.7" width="4" height="4" fill="#800000" opacity="0.52" transform="rotate(-57.3 351.4 425.7)" shape-rendering="geometricPrecision"/>
<rect x="356.1" y="428.0" width="4" height="4" fill="#800000" opacity="0.52" transform="rotate(-57.3 358.1 430.0)" shape-rendering="geometricPrecision"/>
<rect x="362.9" y="432.4" width="4" height="4" fill="#800000" opacity="0.52" transform="rotate(-57.3 364.9 434.4)" shape-rendering="geometricPrecision"/>
<rect x="369.6" y="436.7" width="4" height="4" fill="#800000" opacity="0.52" transform="rotate(-57.3 371.6 438.7)" shape-rendering="geometricPrecision"/>
<rect x="376.3" y="441.0" width="4" height="4" fill="#800000" opacity="0.52" transform="rotate(-57.3 378.3 443.0)" shape-rendering="geometricPrecision"/>
<rect x="383.1" y="445.3" width="4" height="4" fill="#800000" opacity="0.52" transform="rotate(-57.3 385.1 447.3)" shape-rendering="geometricPrecision"/>
<rect x="389.8" y="449.7" width="4" height="4" fill="#800000" opacity="0.52" transform="rotate(-57.3 391.8 451.7)" shape-rendering="geometricPrecision"/>
<rect x="396.5" y="454.0" width="4" height="4" fill="#800000" opacity="0.52" transform="rotate(-57.3 398.5 456.0)" shape-rendering="geometricPrecision"/>
<rect x="403.3" y="458.3" width="4" height="4" fill="#800000" opacity="0.52" transform="rotate(-57.3 405.3 460.3)" shape-rendering="geometricPrecision"/>
<rect x="410.0" y="462.6" width="4" height="4" fill="#800000" opacity="0.52" transform="rotate(-57.3 412.0 464.6)" shape-rendering="geometricPrecision"/>
<rect x="416.7" y="466.9" width="4" height="4" fill="#800000" opacity="0.52" transform="rotate(-57.3 418.7 468.9)" shape-rendering="geometricPrecision"/>
<rect x="423.5" y="471.3" width="4" height="4" fill="#800000" opacity="0.52" transform="rotate(-57.3 425.5 473.3)" shape-rendering="geometricPrecision"/>
<rect x="430.2" y="475.6" width="4" height="4" fill="#800000" opacity="0.52" transform="rotate(-57.3 432.2 477.6)" shape-rendering="geometricPrecision"/>
<rect x="436.9" y="479.9" width="4" height="4" fill="#800000" opacity="0.52" transform="rotate(-57.3 438.9 481.9)" shape-rendering="geometricPrecision"/>
<rect x="443.6" y="484.2" width="4" height="4" fill="#800000" opacity="0.52" transform="rotate(-57.3 445.6 486.2)" shape-rendering="geometricPrecision"/>
<rect x="450.4" y="488.6" width="4" height="4" fill="#800000" opacity="0.52" transform="rotate(-57.3 452.4 490.6)" shape-rendering="geometricPrecision"/>
<rect x="457.1" y="492.9" width="4" height="4" fill="#800000" opacity="0.52" transform="rotate(-57.3 459.1 494.9)" shape-rendering="geometricPrecision"/>
<rect x="463.8" y="497.2" width="4" height="4" fill="#800000" opacity="0.52" transform="rotate(-57.3 465.8 499.2)" shape-rendering="geometricPrecision"/>
<rect x="470.6" y="501.5" width="4" height="4" fill="#800000" opacity="0.52" transform="rotate(-57.3 472.6 503.5)" shape-rendering="geometricPrecision"/>
<rect x="477.3" y="505.9" width="4" height="4" fill="#800000" opacity="0.52" transform="rotate(-57.3 479.3 507.9)" shape-rendering="geometricPrecision"/>
<rect x="484.0" y="510.2" width="4" height="4" fill="#800000" opacity="0.52" transform="rotate(-57.3 486.0 512.2)" shape-rendering="geometricPrecision"/>
<rect x="490.8" y="514.5" width="4" height="4" fill="#800000" opacity="0.52" transform="rotate(-57.3 492.8 516.5)" shape-rendering="geometricPrecision"/>
<rect x="497.5" y="518.8" width="4" height="4" fill="#800000" opacity="0.52" transform="rotate(-57.3 499.5 520.8)" shape-rendering="geometricPrecision"/>
<rect x="504.2" y="523.1" width="4" height="4" fill="#800000" opacity="0.52" transform="rotate(-57.3 506.2 525.1)" shape-rendering="geometricPrecision"/>
<rect x="511.0" y="527.5" width="4" height="4" fill="#800000" opacity="0.52" transform="rotate(-57.3 513.0 529.5)" shape-rendering="geometricPrecision"/>
<rect x="517.7" y="531.8" width="4" height="4" fill="#800000" opacity="0.52" transform="rotate(-57.3 519.7 533.8)" shape-rendering="geometricPrecision"/>
<rect x="524.4" y="536.1" width="4" height="4" fill="#800000" opacity="0.52" transform="rotate(-57.3 526.4 538.1)" shape-rendering="geometricPrecision"/>
<rect x="531.2" y="540.4" width="4" height="4" fill="#800000" opacity="0.52" transform="rotate(-57.3 533.2 542.4)" shape-rendering="geometricPrecision"/>
<rect x="537.9" y="544.8" width="4" height="4" fill="#800000" opacity="0.52" transform="rotate(-57.3 539.9 546.8)" shape-rendering="geometricPrecision"/>
<rect x="544.6" y="549.1" width="4" height="4" fill="#800000" opacity="0.52" transform="rotate(-57.3 546.6 551.1)" shape-rendering="geometricPrecision"/>
<rect x="551.4" y="553.4" width="4" height="4" fill="#800000" opacity="0.52" transform="rotate(-57.3 553.4 555.4)" shape-rendering="geometricPrecision"/>
<rect x="558.1" y="557.7" width="4" height="4" fill="#800000" opacity="0.52" transform="rotate(-57.3 560.1 559.7)" shape-rendering="geometricPrecision"/>
<rect x="564.8" y="562.1" width="4" height="4" fill="#800000" opacity="0.52" transform="rotate(-57.3 566.8 564.1)" shape-rendering="geometricPrecision"/>
<rect x="571.5" y="566.4" width="4" height="4" fill="#800000" opacity="0.52" transform="rotate(-57.3 573.5 568.4)" shape-rendering="geometricPrecision"/>
<rect x="578.3" y="570.7" width="4" height="4" fill="#800000" opacity="0.52" transform="rotate(-57.3 580.3 572.7)" shape-rendering="geometricPrecision"/>
<rect x="585.0" y="575.0" width="4" height="4" fill="#800000" opacity="0.52" transform="rotate(-57.3 587.0 577.0)" shape-rendering="geometricPrecision"/>
<rect x="591.7" y="579.3" width="4" height="4" fill="#800000" opacity="0.52" transform="rotate(-57.3 593.7 581.3)" shape-rendering="geometricPrecision"/>
<rect x="598.5" y="583.7" width="4" height="4" fill="#800000" opacity="0.52" transform="rotate(-57.3 600.5 585.7)" shape-rendering="geometricPrecision"/>
<rect x="605.2" y="588.0" width="4" height="4" fill="#800000" opacity="0.52" transform="rotate(-57.3 607.2 590.0)" shape-rendering="geometricPrecision"/>
<rect x="611.9" y="592.3" width="4" height="4" fill="#800000" opacity="0.52" transform="rotate(-57.3 613.9 594.3)" shape-rendering="geometricPrecision"/>
<polygon points="628.7,603.0 606.7,600.2 616.1,594.9 617.0,584.2" fill="#800000" opacity="0.45" shape-rendering="geometricPrecision"/>
</svg></body></html>
